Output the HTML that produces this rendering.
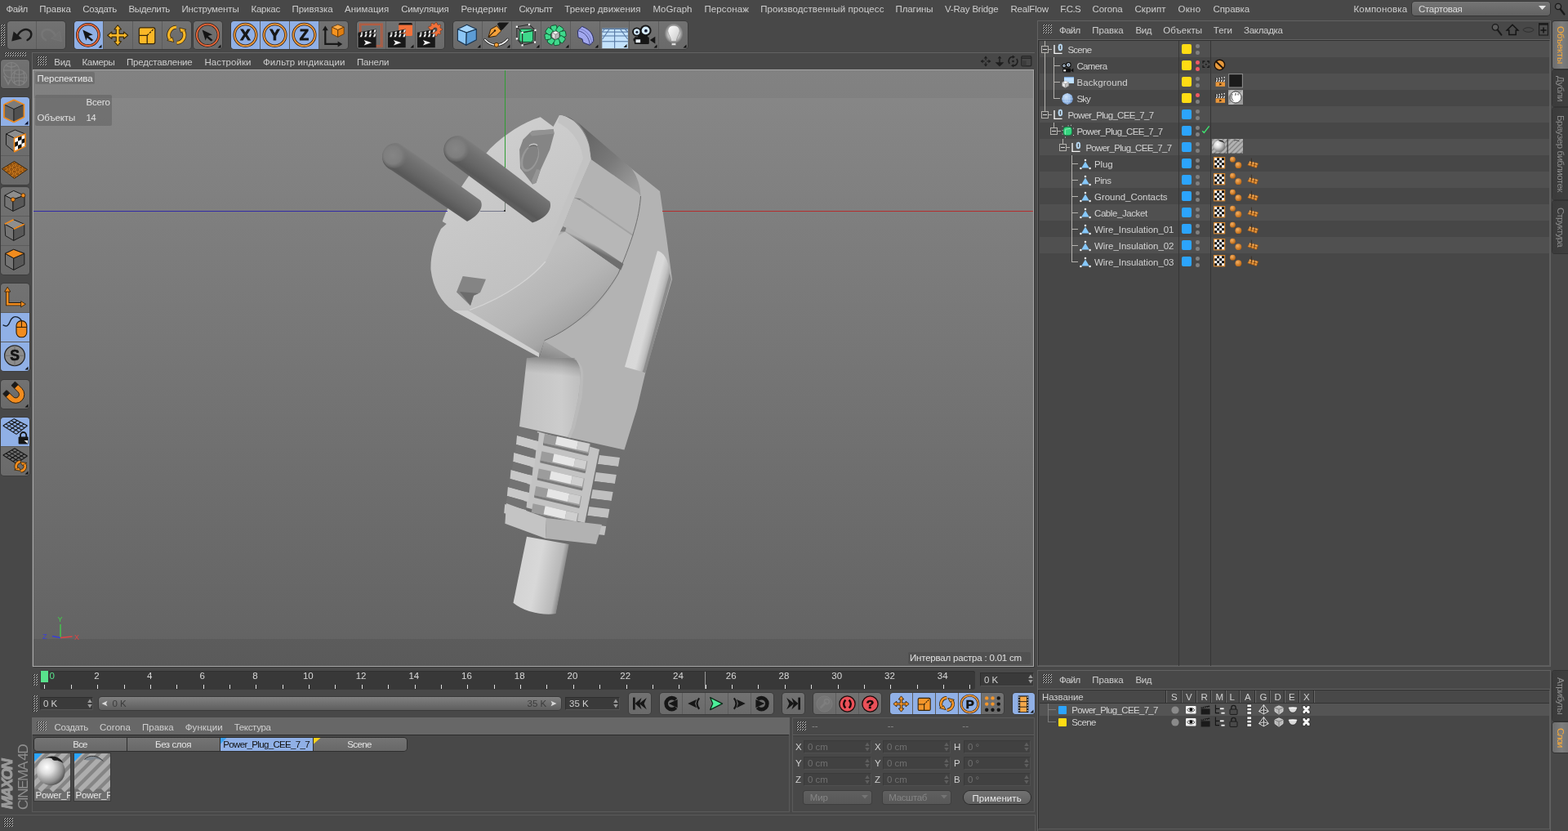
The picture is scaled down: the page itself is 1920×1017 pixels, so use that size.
<!DOCTYPE html>
<html lang="ru"><head><meta charset="utf-8"><title>CINEMA 4D</title>
<style>
html,body{margin:0;padding:0;background:#484848;}
body{width:1920px;height:1017px;overflow:hidden;position:relative;font-family:"Liberation Sans",sans-serif;font-size:11.5px;color:#cdcdcd;}
.b{position:absolute;box-sizing:border-box;}
.t{position:absolute;white-space:nowrap;line-height:14px;}
#root{position:absolute;left:0;top:0;width:1920px;height:1017px;overflow:hidden;will-change:transform;}
svg{position:absolute;overflow:visible;}
.grip{position:absolute;background-image:repeating-linear-gradient(135deg,#999 0,#999 1px,transparent 1px,transparent 2.83px);opacity:.75}
.btn{position:absolute;box-sizing:border-box;background:linear-gradient(#727272,#6a6a6a);}
.grp{position:absolute;box-sizing:border-box;border-radius:4px;background:linear-gradient(#727272,#6a6a6a);box-shadow:0 0 0 1px #3c3c3c;overflow:hidden;}
.grp .sep{position:absolute;background:#5c5c5c;}
.on{position:absolute;background:#90b0e6;}
.fld{position:absolute;box-sizing:border-box;background:#3a3a3a;border:1px solid #2f2f2f;border-bottom-color:#555;border-right-color:#505050;}
</style></head>
<body>
<div id="root">
<svg width="0" height="0" style="left:0;top:0"><defs><pattern id="gp" width="3" height="3" patternUnits="userSpaceOnUse"><rect x="1" y="0" width="1" height="1" fill="#262626"/><rect x="0" y="1" width="1" height="1" fill="#262626"/><rect x="2" y="0" width="1" height="1" fill="#c4c4c4"/><rect x="1" y="1" width="1" height="1" fill="#c4c4c4"/></pattern></defs></svg><span class="t" style="left:7.5px;top:4.02px;letter-spacing:-0.506px;">Файл</span><span class="t" style="left:48.25px;top:4.02px;letter-spacing:-0.058px;">Правка</span><span class="t" style="left:101.25px;top:4.02px;letter-spacing:-0.279px;">Создать</span><span class="t" style="left:157.5px;top:4.02px;letter-spacing:-0.319px;">Выделить</span><span class="t" style="left:222.5px;top:4.02px;letter-spacing:-0.155px;">Инструменты</span><span class="t" style="left:307.5px;top:4.02px;letter-spacing:-0.237px;">Каркас</span><span class="t" style="left:357.5px;top:4.02px;letter-spacing:-0.031px;">Привязка</span><span class="t" style="left:422px;top:4.02px;letter-spacing:0.033px;">Анимация</span><span class="t" style="left:491.25px;top:4.02px;letter-spacing:-0.243px;">Симуляция</span><span class="t" style="left:564.5px;top:4.02px;letter-spacing:0.041px;">Рендеринг</span><span class="t" style="left:635.5px;top:4.02px;letter-spacing:-0.273px;">Скульпт</span><span class="t" style="left:691.25px;top:4.02px;letter-spacing:0.040px;">Трекер движения</span><span class="t" style="left:799.5px;top:4.02px;letter-spacing:0.009px;">MoGraph</span><span class="t" style="left:862.5px;top:4.02px;letter-spacing:0.091px;">Персонаж</span><span class="t" style="left:931.25px;top:4.02px;letter-spacing:0.096px;">Производственный процесс</span><span class="t" style="left:1096.5px;top:4.02px;letter-spacing:-0.087px;">Плагины</span><span class="t" style="left:1157px;top:4.02px;letter-spacing:-0.188px;">V-Ray Bridge</span><span class="t" style="left:1237.5px;top:4.02px;letter-spacing:-0.210px;">RealFlow</span><span class="t" style="left:1298.25px;top:4.02px;letter-spacing:-0.673px;">F.C.S</span><span class="t" style="left:1337.5px;top:4.02px;letter-spacing:-0.120px;">Corona</span><span class="t" style="left:1389.5px;top:4.02px;letter-spacing:0.058px;">Скрипт</span><span class="t" style="left:1442.5px;top:4.02px;letter-spacing:0.319px;">Окно</span><span class="t" style="left:1485.5px;top:4.02px;letter-spacing:-0.088px;">Справка</span><span class="t" style="left:1657.5px;top:4.02px;letter-spacing:0.159px;">Компоновка</span><div class="b" style="left:1729px;top:2px;width:169px;height:17px;border-radius:4px;background:linear-gradient(#757575,#626262);box-shadow:0 0 0 1px #353535;"></div><span class="t" style="left:1737px;top:4.02px;color:#dcdcdc;letter-spacing:-0.291px;">Стартовая</span><svg style="left:1884px;top:7px" width="9" height="6"><path d="M0 0h9L4.5 5z" fill="#e4e4e4"/></svg><svg style="left:1903px;top:3px" width="14" height="16" viewBox="0 0 14 16"><circle cx="5" cy="5" r="3.6" fill="#5a5a5a" stroke="#1a1a1a" stroke-width="1.4"/><path d="M7.5 8L12.5 14.5" stroke="#1a1a1a" stroke-width="2.2" stroke-linecap="round"/></svg><svg style="left:0px;top:30px" width="6" height="27"><rect width="6" height="27" fill="url(#gp)"/></svg><div class="grp" style="left:9px;top:26px;width:71px;height:34px"><div class="sep" style="left:35px;top:0;width:1px;height:34px"></div></div><svg style="left:9px;top:26px" width="35" height="34" viewBox="0 0 35 34"><polygon points="5.2,24.6 7.6,12.4 18,21.2" fill="#1c1c1c" /><path d="M12.5,17.6 C16,10.5 22,8.8 26.2,10.8 C30.6,13.2 30.6,19.5 24.6,23" fill="none" stroke="#1c1c1c" stroke-width="2.5" stroke-linecap="round"/></svg><svg style="left:45px;top:26px" width="35" height="34" viewBox="0 0 35 34"><g opacity=".55"><polygon points="30.4,24.6 28,12.4 17.6,21.2" fill="#747474" stroke="#7e7e7e" stroke-width="0.8" stroke-linejoin="round" /><path d="M23,17.6 C19.5,10.5 13.5,8.8 9.4,10.8 C5,13.2 5,19.5 11,23" fill="none" stroke="#7c7c7c" stroke-width="2.5" stroke-linecap="round"/></g></svg><div class="grp" style="left:91px;top:26px;width:143px;height:34px"><div class="on" style="left:0px;top:0;width:35px;height:34px"></div><div class="sep" style="left:35px;top:0;width:1px;height:34px"></div><div class="sep" style="left:71px;top:0;width:1px;height:34px"></div><div class="sep" style="left:107px;top:0;width:1px;height:34px"></div></div><svg style="left:91px;top:26px" width="35" height="34" viewBox="0 0 35 34"><circle cx="16.9" cy="16.8" r="13.2" fill="none" stroke="#2a1a10" stroke-width="3.4"/><circle cx="16.9" cy="16.8" r="13.2" fill="none" stroke="#e8683c" stroke-width="1.9"/><polygon points="10.25,10.6 22.75,16.4 17.3,18.1 23.2,23.1 21.1,24.6 15.7,19.9 14.4,23.8" fill="#141414" /><path d="M33.5 28.5L33.5 32.5L29.5 32.5z" fill="#111"/></svg><svg style="left:127px;top:26px" width="35" height="34" viewBox="0 0 35 34"><polygon points="17.2,4.75 21.4,9.95 19.1,9.95 19.1,15.35 24.5,15.35 24.5,13.05 29.7,17.25 24.5,21.45 24.5,19.15 19.1,19.15 19.1,24.55 21.4,24.55 17.2,29.75 13,24.55 15.3,24.55 15.3,19.15 9.9,19.15 9.9,21.45 4.7,17.25 9.9,13.05 9.9,15.35 15.3,15.35 15.3,9.95 13,9.95" fill="#fcb827" stroke="#3a2a08" stroke-width="1.1" stroke-linejoin="round" /></svg><svg style="left:163px;top:26px" width="35" height="34" viewBox="0 0 35 34"><rect x="7.3" y="7.8" width="19.5" height="19.8" rx="2" fill="#fcb827" stroke="#33240a" stroke-width="1.2"/><path d="M7.3,17.4H17.2V27.6" fill="none" stroke="#33240a" stroke-width="1.3"/><path d="M17.2,17.4L26,8.6" fill="none" stroke="#33240a" stroke-width="1.3" stroke-dasharray="2.6 1.3"/></svg><svg style="left:199px;top:26px" width="35" height="34" viewBox="0 0 35 34"><path d="M16.91,7.21 A9.6,9.6 0 0 0 8.94,21.60" fill="none" stroke="#33240a" stroke-width="4.7"/><path d="M16.91,7.21 A9.6,9.6 0 0 0 8.94,21.60" fill="none" stroke="#fcb827" stroke-width="3.2"/><polygon points="5.74918,23.44 13.7257,25.5229 12.1231,19.76" fill="#fcb827" stroke="#33240a" stroke-width="0.8" stroke-linejoin="round" /><path d="M8.70,21.16 L9.11,21.89" stroke="#fcb827" stroke-width="3.2"/><path d="M17.59,26.39 A9.6,9.6 0 0 0 25.56,12.00" fill="none" stroke="#33240a" stroke-width="4.7"/><path d="M17.59,26.39 A9.6,9.6 0 0 0 25.56,12.00" fill="none" stroke="#fcb827" stroke-width="3.2"/><polygon points="28.7508,10.16 20.7743,8.07705 22.3769,13.84" fill="#fcb827" stroke="#33240a" stroke-width="0.8" stroke-linejoin="round" /><path d="M25.80,12.44 L25.39,11.71" stroke="#fcb827" stroke-width="3.2"/></svg><div class="grp" style="left:237px;top:26px;width:35px;height:34px"></div><svg style="left:237px;top:26px" width="35" height="34" viewBox="0 0 35 34"><circle cx="17.2" cy="16.8" r="13.2" fill="none" stroke="#2a1a10" stroke-width="3.4"/><circle cx="17.2" cy="16.8" r="13.2" fill="none" stroke="#e8683c" stroke-width="1.9"/><polygon points="10.55,10.6 23.05,16.4 17.6,18.1 23.5,23.1 21.4,24.6 16,19.9 14.7,23.8" fill="#141414" /><path d="M33.5 28.5L33.5 32.5L29.5 32.5z" fill="#111"/></svg><div class="grp" style="left:283px;top:26px;width:143px;height:34px"><div class="on" style="left:0px;top:0;width:35px;height:34px"></div><div class="on" style="left:36px;top:0;width:35px;height:34px"></div><div class="on" style="left:72px;top:0;width:35px;height:34px"></div><div class="sep" style="left:35px;top:0;width:1px;height:34px"></div><div class="sep" style="left:71px;top:0;width:1px;height:34px"></div><div class="sep" style="left:107px;top:0;width:1px;height:34px"></div></div><svg style="left:283px;top:26px" width="35" height="34" viewBox="0 0 35 34"><circle cx="17.5" cy="16.8" r="13.3" fill="none" stroke="#2a1a10" stroke-width="3.4"/><circle cx="17.5" cy="16.8" r="13.3" fill="none" stroke="#e8963a" stroke-width="1.9"/><text x="17.5" y="23.3" text-anchor="middle" font-family="Liberation Sans,sans-serif" font-weight="bold" font-size="18.5" fill="#161616" stroke="#161616" stroke-width="0.9">X</text></svg><svg style="left:319px;top:26px" width="35" height="34" viewBox="0 0 35 34"><circle cx="17.5" cy="16.8" r="13.3" fill="none" stroke="#2a1a10" stroke-width="3.4"/><circle cx="17.5" cy="16.8" r="13.3" fill="none" stroke="#e8963a" stroke-width="1.9"/><text x="17.5" y="23.3" text-anchor="middle" font-family="Liberation Sans,sans-serif" font-weight="bold" font-size="18.5" fill="#161616" stroke="#161616" stroke-width="0.9">Y</text></svg><svg style="left:355px;top:26px" width="35" height="34" viewBox="0 0 35 34"><circle cx="17.5" cy="16.8" r="13.3" fill="none" stroke="#2a1a10" stroke-width="3.4"/><circle cx="17.5" cy="16.8" r="13.3" fill="none" stroke="#e8963a" stroke-width="1.9"/><text x="17.5" y="23.3" text-anchor="middle" font-family="Liberation Sans,sans-serif" font-weight="bold" font-size="18.5" fill="#161616" stroke="#161616" stroke-width="0.9">Z</text></svg><svg style="left:391px;top:26px" width="35" height="34" viewBox="0 0 35 34"><path d="M7.3,9V27.9H24" fill="none" stroke="#181818" stroke-width="2.2"/><polygon points="7.3,5.6 10.8,11.2 3.8,11.2" fill="#181818" /><polygon points="28.3,27.9 22.6,24.4 22.6,31.4" fill="#181818" /><polygon points="22.7,4 30.2,7.2 22.7,10.6 15.2,7.2" fill="#ffab45" stroke="#5a3208" stroke-width="0.8" stroke-linejoin="round" /><polygon points="15.2,7.2 22.7,10.6 22.7,19.3 15.2,15.6" fill="#f5921e" stroke="#5a3208" stroke-width="0.8" stroke-linejoin="round" /><polygon points="22.7,10.6 30.2,7.2 30.2,15.6 22.7,19.3" fill="#e07e10" stroke="#5a3208" stroke-width="0.8" stroke-linejoin="round" /></svg><div class="grp" style="left:437px;top:26px;width:107px;height:34px"><div class="sep" style="left:35px;top:0;width:1px;height:34px"></div><div class="sep" style="left:71px;top:0;width:1px;height:34px"></div></div><svg style="left:437px;top:26px" width="35" height="34" viewBox="0 0 35 34"><rect x="4.2" y="3.8" width="26.2" height="26.6" fill="none" stroke="#d9562c" stroke-width="2.4"/><rect x="4.2" y="3.8" width="26.2" height="26.6" fill="none" stroke="#6b6b6b" stroke-width="0.7"/><polygon points="1.6,13.8 23.6,9.4 23.6,13.4 1.6,17.8" fill="#181818" /><polygon points="5.1,13.86 7.3,13.46 6.5,16.56 4.3,16.96" fill="#f2f2f2" /><polygon points="10.5,12.78 12.7,12.38 11.9,15.48 9.7,15.88" fill="#f2f2f2" /><polygon points="15.9,11.7 18.1,11.3 17.3,14.4 15.1,14.8" fill="#f2f2f2" /><polygon points="21.3,10.62 23.5,10.22 22.7,13.32 20.5,13.72" fill="#f2f2f2" /><rect x="1.6" y="19.6" width="22" height="12.6" fill="#181818"/><rect x="1.6" y="15" width="22" height="4.8" fill="#181818"/><polygon points="5.1,15.5 7.3,15.5 5.9,19.2 3.7,19.2" fill="#f2f2f2" /><polygon points="10.5,15.5 12.7,15.5 11.3,19.2 9.1,19.2" fill="#f2f2f2" /><polygon points="15.9,15.5 18.1,15.5 16.7,19.2 14.5,19.2" fill="#f2f2f2" /><polygon points="21.3,15.5 23.5,15.5 22.1,19.2 19.9,19.2" fill="#f2f2f2" /><polygon points="8.6,23 18.1,26.2 8.6,29.4 10.8,26.2" fill="#f4f4f4" /></svg><svg style="left:473px;top:26px" width="35" height="34" viewBox="0 0 35 34"><rect x="15.2" y="2" width="16.8" height="16" rx="1.6" fill="#f2713a"/><path d="M15.2,4.6V3.6Q15.2,2 16.8,2H30.4Q32,2 32,3.6V4.6z" fill="#181818"/><polygon points="2,13.8 23.7,9.4 23.7,13.4 2,17.8" fill="#181818" /><polygon points="5.5,13.86 7.7,13.46 6.9,16.56 4.7,16.96" fill="#f2f2f2" /><polygon points="10.9,12.78 13.1,12.38 12.3,15.48 10.1,15.88" fill="#f2f2f2" /><polygon points="16.3,11.7 18.5,11.3 17.7,14.4 15.5,14.8" fill="#f2f2f2" /><polygon points="21.7,10.62 23.9,10.22 23.1,13.32 20.9,13.72" fill="#f2f2f2" /><rect x="2" y="19.6" width="21.7" height="12.6" fill="#181818"/><rect x="2" y="15" width="21.7" height="4.8" fill="#181818"/><polygon points="5.5,15.5 7.7,15.5 6.3,19.2 4.1,19.2" fill="#f2f2f2" /><polygon points="10.9,15.5 13.1,15.5 11.7,19.2 9.5,19.2" fill="#f2f2f2" /><polygon points="16.3,15.5 18.5,15.5 17.1,19.2 14.9,19.2" fill="#f2f2f2" /><polygon points="21.7,15.5 23.9,15.5 22.5,19.2 20.3,19.2" fill="#f2f2f2" /><polygon points="8.85,23 18.35,26.2 8.85,29.4 11.05,26.2" fill="#f4f4f4" /><path d="M33.5 28.5L33.5 32.5L29.5 32.5z" fill="#111"/></svg><svg style="left:509px;top:26px" width="35" height="34" viewBox="0 0 35 34"><polygon points="32.3652,9.22704 32.3693,10.7261 30.2842,11.7184 29.8872,12.8183 30.8582,14.9135 29.8977,16.0645 27.6626,15.4843 26.6515,16.0717 26.0485,18.3008 24.573,18.5652 23.2336,16.684 22.0816,16.4842 20.1868,17.8042 18.8865,17.0582 19.0697,14.7562 18.3157,13.8626 16.0157,13.6558 15.4992,12.2485 17.1191,10.6029 17.116,9.43363 15.487,7.79687 15.9958,6.3868 18.2946,6.16748 19.0438,5.26971 18.848,2.9688 20.1442,2.21572 22.0461,3.52534 23.1971,3.31915 24.5261,1.43071 26.0031,1.68698 26.6183,3.91276 27.6325,4.49463 29.8645,3.90228 30.8312,5.048 29.8717,7.14847 30.2747,8.24614" fill="#f2713a" stroke="#6a2a10" stroke-width="0.6" stroke-linejoin="round" /><circle cx="23.8" cy="10" r="2.6" fill="#4a4a4a"/><polygon points="2,13.8 23.8,9.4 23.8,13.4 2,17.8" fill="#181818" /><polygon points="5.5,13.86 7.7,13.46 6.9,16.56 4.7,16.96" fill="#f2f2f2" /><polygon points="10.9,12.78 13.1,12.38 12.3,15.48 10.1,15.88" fill="#f2f2f2" /><polygon points="16.3,11.7 18.5,11.3 17.7,14.4 15.5,14.8" fill="#f2f2f2" /><polygon points="21.7,10.62 23.9,10.22 23.1,13.32 20.9,13.72" fill="#f2f2f2" /><rect x="2" y="19.6" width="21.8" height="12.6" fill="#181818"/><rect x="2" y="15" width="21.8" height="4.8" fill="#181818"/><polygon points="5.5,15.5 7.7,15.5 6.3,19.2 4.1,19.2" fill="#f2f2f2" /><polygon points="10.9,15.5 13.1,15.5 11.7,19.2 9.5,19.2" fill="#f2f2f2" /><polygon points="16.3,15.5 18.5,15.5 17.1,19.2 14.9,19.2" fill="#f2f2f2" /><polygon points="21.7,15.5 23.9,15.5 22.5,19.2 20.3,19.2" fill="#f2f2f2" /><polygon points="8.9,23 18.4,26.2 8.9,29.4 11.1,26.2" fill="#f4f4f4" /></svg><div class="grp" style="left:555px;top:26px;width:287px;height:34px"><div class="sep" style="left:35px;top:0;width:1px;height:34px"></div><div class="sep" style="left:71px;top:0;width:1px;height:34px"></div><div class="sep" style="left:107px;top:0;width:1px;height:34px"></div><div class="sep" style="left:143px;top:0;width:1px;height:34px"></div><div class="sep" style="left:179px;top:0;width:1px;height:34px"></div><div class="sep" style="left:215px;top:0;width:1px;height:34px"></div><div class="sep" style="left:251px;top:0;width:1px;height:34px"></div></div><svg style="left:555px;top:26px" width="35" height="34" viewBox="0 0 35 34"><polygon points="16.7,4.3 28.3,9.75 16.25,13.9 5.4,9.75" fill="#a6d6fb" stroke="#17334f" stroke-width="1.1" stroke-linejoin="round" /><polygon points="5.4,9.75 16.25,13.9 15.8,29.3 5.4,23.5" fill="#8cc6f6" stroke="#17334f" stroke-width="1.1" stroke-linejoin="round" /><polygon points="16.25,13.9 28.3,9.75 28.3,22.7 15.8,29.3" fill="#5d9dd6" stroke="#17334f" stroke-width="1.1" stroke-linejoin="round" /><path d="M33.5 28.5L33.5 32.5L29.5 32.5z" fill="#111"/></svg><svg style="left:591px;top:26px" width="35" height="34" viewBox="0 0 35 34"><polygon points="17.75,3 20.25,1.4 32.3,1.4 24.8,9.75 22.3,11.4" fill="#181818" /><polygon points="6.9,19.75 9.8,9.75 17.3,5.6 22.75,11.8 16.5,18" fill="#f5a13a" stroke="#3a2206" stroke-width="1" stroke-linejoin="round" /><path d="M7.4,19.2L15,11.6" stroke="#2a1804" stroke-width="1.1"/><circle cx="15" cy="11.4" r="1.2" fill="#2a1804"/><path d="M2.75,22.5 C8,28 12,29.2 16.6,29.2 C22,29.2 27,26.5 30.7,22.1" fill="none" stroke="#222" stroke-width="3.2" stroke-linecap="round"/><path d="M2.75,22.5 C8,28 12,29.2 16.6,29.2 C22,29.2 27,26.5 30.7,22.1" fill="none" stroke="#f4f4f4" stroke-width="1.7" stroke-linecap="round"/><circle cx="16.9" cy="28.9" r="2.6" fill="#f5a13a" stroke="#3a2206" stroke-width="0.9"/><path d="M33.5 28.5L33.5 32.5L29.5 32.5z" fill="#111"/></svg><svg style="left:627px;top:26px" width="35" height="34" viewBox="0 0 35 34"><rect x="9" y="9.4" width="16.6" height="16" rx="3" fill="#3fd98c" stroke="#0d4f2c" stroke-width="1"/><path d="M12.6,13.6L24.4,11.6M12.6,13.6V25" stroke="#0d6f3c" stroke-width="1.1" fill="none"/><path d="M9.6,12.5L12.8,14" stroke="#0d6f3c" stroke-width="1"/><path d="M5.9,6.8L21,4L28.4,11L28,25.6L12.6,29.3L5.9,21.4Z M5.9,6.8L12.6,14L28.4,11 M12.6,14V29.3" fill="none" stroke="#2a2a2a" stroke-width="1.1"/><rect x="4.8" y="5.7" width="2.2" height="2.2" fill="#fff"/><rect x="19.9" y="2.9" width="2.2" height="2.2" fill="#fff"/><rect x="27.3" y="9.9" width="2.2" height="2.2" fill="#fff"/><rect x="26.9" y="24.5" width="2.2" height="2.2" fill="#fff"/><rect x="11.5" y="28.2" width="2.2" height="2.2" fill="#fff"/><rect x="4.8" y="20.3" width="2.2" height="2.2" fill="#fff"/><rect x="11.5" y="12.9" width="2.2" height="2.2" fill="#fff"/><path d="M33.5 28.5L33.5 32.5L29.5 32.5z" fill="#111"/></svg><svg style="left:663px;top:26px" width="35" height="34" viewBox="0 0 35 34"><rect x="11.6851" y="5.03065" width="7.4" height="7.4" rx="1.6" fill="#3fd98c" stroke="#0d4f2c" stroke-width="0.9" transform="rotate(-10 15.3851 8.73065)"/><rect x="18.6343" y="6.45529" width="7.4" height="7.4" rx="1.6" fill="#3fd98c" stroke="#0d4f2c" stroke-width="0.9" transform="rotate(35 22.3343 10.1553)"/><rect x="22.4587" y="12.0066" width="7.4" height="7.4" rx="1.6" fill="#3fd98c" stroke="#0d4f2c" stroke-width="0.9" transform="rotate(80 26.1587 15.7066)"/><rect x="20.9181" y="18.4328" width="7.4" height="7.4" rx="1.6" fill="#3fd98c" stroke="#0d4f2c" stroke-width="0.9" transform="rotate(125 24.6181 22.1328)"/><rect x="14.9149" y="21.9693" width="7.4" height="7.4" rx="1.6" fill="#3fd98c" stroke="#0d4f2c" stroke-width="0.9" transform="rotate(170 18.6149 25.6693)"/><rect x="7.96574" y="20.5447" width="7.4" height="7.4" rx="1.6" fill="#3fd98c" stroke="#0d4f2c" stroke-width="0.9" transform="rotate(215 11.6657 24.2447)"/><rect x="4.14129" y="14.9934" width="7.4" height="7.4" rx="1.6" fill="#3fd98c" stroke="#0d4f2c" stroke-width="0.9" transform="rotate(260 7.84129 18.6934)"/><rect x="5.68189" y="8.56724" width="7.4" height="7.4" rx="1.6" fill="#3fd98c" stroke="#0d4f2c" stroke-width="0.9" transform="rotate(305 9.38189 12.2672)"/><polygon points="17.2,12 21.6,14 17.2,16.2 13,14" fill="#f6f6f6" stroke="#777" stroke-width="0.5" stroke-linejoin="round" /><polygon points="13,14 17.2,16.2 17,22.2 13,19.6" fill="#e2e2e2" stroke="#777" stroke-width="0.5" stroke-linejoin="round" /><polygon points="17.2,16.2 21.6,14 21.6,19.8 17,22.2" fill="#b8b8b8" stroke="#777" stroke-width="0.5" stroke-linejoin="round" /><path d="M33.5 28.5L33.5 32.5L29.5 32.5z" fill="#111"/></svg><svg style="left:699px;top:26px" width="35" height="34" viewBox="0 0 35 34"><path d="M13.7,6.4 L8.25,11.4 L9,19.75 L14,21.8 L15,26 L23.25,29.3 L27.8,24.3 C27.6,16 24,10.5 13.7,6.4 Z" fill="#a2a8ef" stroke="#2a2e66" stroke-width="1"/><path d="M8.6,11.6 C17,13.5 22.3,19 23.3,29" fill="none" stroke="#3a3f7a" stroke-width="0.9"/><path d="M11,9 C19,11.5 24.6,17.5 25.6,26.6" fill="none" stroke="#6a70b8" stroke-width="0.8"/><path d="M33.5 28.5L33.5 32.5L29.5 32.5z" fill="#111"/></svg><svg style="left:735px;top:26px" width="35" height="34" viewBox="0 0 35 34"><rect x="2.3" y="8.6" width="31.6" height="24.6" fill="#c4e2fb"/><rect x="2.3" y="8.6" width="31.6" height="1.3" fill="#47678c"/><rect x="2.3" y="12.6" width="31.6" height="1.1" fill="#5a7ca6"/><rect x="2.3" y="17.4" width="31.6" height="1.1" fill="#5a7ca6"/><rect x="2.3" y="24.2" width="31.6" height="1.1" fill="#5a7ca6"/><path d="M17.6,9V33 M11.6,9L2.6,22 M24,9L33.6,22 M6,9L2.4,13 M29.6,9L33.8,13" stroke="#5a7ca6" stroke-width="1.1" fill="none"/><path d="M32.5 28L32.5 32L28.5 32z" fill="#111"/></svg><svg style="left:771px;top:26px" width="35" height="34" viewBox="0 0 35 34"><rect x="5.8" y="19.3" width="18" height="8.6" rx="1.2" fill="#161616"/><polygon points="24.8,22.9 31.3,18.7 31.3,27.4" fill="#161616" /><rect x="10" y="15" width="12" height="6" fill="#161616"/><rect x="4.6" y="21" width="3" height="3.4" fill="#161616"/><circle cx="8.75" cy="13" r="5.6" fill="#161616"/><circle cx="19.6" cy="11.4" r="7" fill="#161616"/><circle cx="8.75" cy="13" r="3.7" fill="#d6ecff"/><circle cx="19.6" cy="11.4" r="4.9" fill="#d6ecff"/><circle cx="8.9" cy="13.2" r="1.5" fill="#161c30"/><circle cx="19.9" cy="11.7" r="1.9" fill="#161c30"/><rect x="7.5" y="22.3" width="5.6" height="3.9" fill="#eaf2fa"/><path d="M33.5 28.5L33.5 32.5L29.5 32.5z" fill="#111"/></svg><svg style="left:807px;top:26px" width="35" height="34" viewBox="0 0 35 34"><defs><radialGradient id="lgl"><stop offset=".45" stop-color="#fff" stop-opacity=".85"/><stop offset="1" stop-color="#fff" stop-opacity="0"/></radialGradient><linearGradient id="lbb" x1="0" y1="0" x2="1" y2="1"><stop offset="0" stop-color="#fff"/><stop offset="1" stop-color="#c9c9c9"/></linearGradient></defs><ellipse cx="18" cy="15" rx="11.5" ry="12.5" fill="url(#lgl)"/><path d="M18,5.2 C23.4,5.2 25.6,9.4 25.2,12.6 C24.7,16.6 21.6,19.4 21.2,24.6 H14.8 C14.4,19.4 11.3,16.6 10.8,12.6 C10.4,9.4 12.6,5.2 18,5.2 Z" fill="url(#lbb)" stroke="#8a8a8a" stroke-width="0.7"/><rect x="15" y="24.8" width="6" height="1.6" fill="#8a8a8a"/><rect x="15.2" y="26.8" width="5.6" height="2.6" rx="1" fill="#eee" stroke="#666" stroke-width="0.6"/><path d="M33.5 28.5L33.5 32.5L29.5 32.5z" fill="#111"/></svg><svg style="left:5px;top:64px" width="27" height="6"><rect width="27" height="6" fill="url(#gp)"/></svg><div class="grp" style="left:1px;top:73px;width:35px;height:35px"></div><svg style="left:1px;top:73px" width="35" height="35" viewBox="0 0 35 35"><g fill="none" stroke="#858585" stroke-width="1.1" opacity=".9"><circle cx="13" cy="13" r="9.5"/><path d="M13,3.5V22.5M3.5,13H22.5M6,6.5C10,10 16,10 20,6.5"/><circle cx="22.5" cy="22" r="9.5" fill="#6e6e6e"/><path d="M22.5,12.5V31.5M13,22H32M15.5,16C20,19 25,19 29.5,16M15.5,28C20,25 25,25 29.5,28M17.8,13.8C15.5,19 15.5,25 17.8,30.2M27.2,13.8C29.5,19 29.5,25 27.2,30.2"/><path d="M4,20L9,30L12,24" stroke-width="1.6"/></g></svg><div class="grp" style="left:1px;top:119px;width:35px;height:107px"><div class="on" style="left:0;top:0px;width:35px;height:35px"></div><div class="sep" style="left:0;top:35px;width:35px;height:1px"></div><div class="sep" style="left:0;top:71px;width:35px;height:1px"></div></div><svg style="left:1px;top:119px" width="35" height="35" viewBox="0 0 35 35"><polygon points="16,3.3 28.4,9 16,14.6 4,9" fill="#7c7c7c" stroke="#222" stroke-width="0.9" stroke-linejoin="round" /><polygon points="4,9 16,14.6 16,30.5 4,24.8" fill="#676767" stroke="#222" stroke-width="0.9" stroke-linejoin="round" /><polygon points="16,14.6 28.4,9 28.4,24.2 16,30.5" fill="#505050" stroke="#222" stroke-width="0.9" stroke-linejoin="round" /><polygon points="16,3.3 4,9 4,24.8 16,30.5 28.4,24.2 28.4,9" fill="none" stroke="#f28c1e" stroke-width="1.7" stroke-linejoin="round" /><path d="M33.5 29L33.5 33.5L29 33.5z" fill="#0c1430"/></svg><svg style="left:1px;top:155px" width="35" height="35" viewBox="0 0 35 35"><polygon points="17.4,4 30,9 16.5,14 6.5,9" fill="#8e8e8e" stroke="#1c1c1c" stroke-width="1" stroke-linejoin="round" /><polygon points="6.5,9 16.5,14 16.5,30.7 6.5,22.4" fill="#747474" stroke="#1c1c1c" stroke-width="1" stroke-linejoin="round" /><polygon points="16.5,14 30,9 30,24 16.5,30.7" fill="#fff" stroke="#1c1c1c" stroke-width="1" stroke-linejoin="round" /><polygon points="16.5,19.5667 21,17.7111 21,23.0889 16.5,25.1333" fill="#111" /><polygon points="21,12.3333 25.5,10.6667 25.5,15.8556 21,17.7111" fill="#111" /><polygon points="21,23.0889 25.5,21.0444 25.5,26.2333 21,28.4667" fill="#111" /><polygon points="25.5,15.8556 30,14 30,19 25.5,21.0444" fill="#111" /><polygon points="16.5,14 30,9 30,24 16.5,30.7" fill="none" stroke="#f28c1e" stroke-width="1.6" stroke-linejoin="round" /></svg><svg style="left:1px;top:191px" width="35" height="35" viewBox="0 0 35 35"><polygon points="1.5,15.6 16.5,6.5 32.4,16.5 16.5,27.4" fill="#f5962a" stroke="#2a1a06" stroke-width="1" stroke-linejoin="round" /><path d="M5.25,13.325L20.475,24.675" stroke="#7a4208" stroke-width="0.7"/><path d="M5.25,18.55L20.475,9" stroke="#7a4208" stroke-width="0.7"/><path d="M9,11.05L24.45,21.95" stroke="#7a4208" stroke-width="0.7"/><path d="M9,21.5L24.45,11.5" stroke="#7a4208" stroke-width="0.7"/><path d="M12.75,8.775L28.425,19.225" stroke="#7a4208" stroke-width="0.7"/><path d="M12.75,24.45L28.425,14" stroke="#7a4208" stroke-width="0.7"/><ellipse cx="5.26406" cy="15.9094" rx="1.55" ry="1.05" fill="#c06a14" stroke="#4a2a06" stroke-width="0.7"/><ellipse cx="9.04219" cy="18.8031" rx="1.55" ry="1.05" fill="#c06a14" stroke="#4a2a06" stroke-width="0.7"/><ellipse cx="12.8203" cy="21.6969" rx="1.55" ry="1.05" fill="#c06a14" stroke="#4a2a06" stroke-width="0.7"/><ellipse cx="16.5984" cy="24.5906" rx="1.55" ry="1.05" fill="#c06a14" stroke="#4a2a06" stroke-width="0.7"/><ellipse cx="9.04219" cy="13.5781" rx="1.55" ry="1.05" fill="#c06a14" stroke="#4a2a06" stroke-width="0.7"/><ellipse cx="12.8766" cy="16.3594" rx="1.55" ry="1.05" fill="#c06a14" stroke="#4a2a06" stroke-width="0.7"/><ellipse cx="16.7109" cy="19.1406" rx="1.55" ry="1.05" fill="#c06a14" stroke="#4a2a06" stroke-width="0.7"/><ellipse cx="20.5453" cy="21.9219" rx="1.55" ry="1.05" fill="#c06a14" stroke="#4a2a06" stroke-width="0.7"/><ellipse cx="12.8203" cy="11.2469" rx="1.55" ry="1.05" fill="#c06a14" stroke="#4a2a06" stroke-width="0.7"/><ellipse cx="16.7109" cy="13.9156" rx="1.55" ry="1.05" fill="#c06a14" stroke="#4a2a06" stroke-width="0.7"/><ellipse cx="20.6016" cy="16.5844" rx="1.55" ry="1.05" fill="#c06a14" stroke="#4a2a06" stroke-width="0.7"/><ellipse cx="24.4922" cy="19.2531" rx="1.55" ry="1.05" fill="#c06a14" stroke="#4a2a06" stroke-width="0.7"/><ellipse cx="16.5984" cy="8.91563" rx="1.55" ry="1.05" fill="#c06a14" stroke="#4a2a06" stroke-width="0.7"/><ellipse cx="20.5453" cy="11.4719" rx="1.55" ry="1.05" fill="#c06a14" stroke="#4a2a06" stroke-width="0.7"/><ellipse cx="24.4922" cy="14.0281" rx="1.55" ry="1.05" fill="#c06a14" stroke="#4a2a06" stroke-width="0.7"/><ellipse cx="28.4391" cy="16.5844" rx="1.55" ry="1.05" fill="#c06a14" stroke="#4a2a06" stroke-width="0.7"/></svg><div class="grp" style="left:1px;top:229px;width:35px;height:107px"><div class="sep" style="left:0;top:35px;width:35px;height:1px"></div><div class="sep" style="left:0;top:71px;width:35px;height:1px"></div></div><svg style="left:1px;top:229px" width="35" height="35" viewBox="0 0 35 35"><polygon points="15.7,4.4 29,10.2 14.9,15.2 4.85,10.2" fill="#8e8e8e" stroke="#1c1c1c" stroke-width="1" stroke-linejoin="round" /><polygon points="4.85,10.2 14.9,15.2 14.9,29.4 4.85,23.6" fill="#747474" stroke="#1c1c1c" stroke-width="1" stroke-linejoin="round" /><polygon points="14.9,15.2 29,10.2 29,22.75 14.9,29.4" fill="#585858" stroke="#1c1c1c" stroke-width="1" stroke-linejoin="round" /><circle cx="14.9" cy="15.2" r="2.5" fill="#f28c1e" stroke="#3a2206" stroke-width="0.8"/><circle cx="27.4" cy="10.2" r="2.5" fill="#f28c1e" stroke="#3a2206" stroke-width="0.8"/></svg><svg style="left:1px;top:265px" width="35" height="35" viewBox="0 0 35 35"><polygon points="15.7,3.8 28.8,9.3 15.7,15.2 4.85,9.3" fill="#8e8e8e" stroke="#1c1c1c" stroke-width="1" stroke-linejoin="round" /><polygon points="4.85,9.3 15.7,15.2 15.7,29.4 5.7,23.5" fill="#747474" stroke="#1c1c1c" stroke-width="1" stroke-linejoin="round" /><polygon points="15.7,15.2 28.8,9.3 28.8,22.7 15.7,29.4" fill="#585858" stroke="#1c1c1c" stroke-width="1" stroke-linejoin="round" /><path d="M4.85,9.3L15.7,3.8M15.7,15.2L28.8,9.3" stroke="#f28c1e" stroke-width="1.8"/></svg><svg style="left:1px;top:301px" width="35" height="35" viewBox="0 0 35 35"><polygon points="15.7,4.3 28.8,9.3 15.7,15 5.4,9.3" fill="#8e8e8e" stroke="#1c1c1c" stroke-width="1" stroke-linejoin="round" /><polygon points="5.4,9.3 15.7,15 15.7,29.4 5.7,23.5" fill="#747474" stroke="#1c1c1c" stroke-width="1" stroke-linejoin="round" /><polygon points="15.7,15 28.8,9.3 28.8,22.7 15.7,29.4" fill="#585858" stroke="#1c1c1c" stroke-width="1" stroke-linejoin="round" /><polygon points="15.7,4.3 28.8,9.3 15.7,15 5.4,9.3" fill="#f28c1e" stroke="#1c1c1c" stroke-width="1" stroke-linejoin="round" /></svg><div class="grp" style="left:1px;top:347px;width:35px;height:107px"><div class="on" style="left:0;top:36px;width:35px;height:35px"></div><div class="on" style="left:0;top:72px;width:35px;height:35px"></div><div class="sep" style="left:0;top:35px;width:35px;height:1px"></div><div class="sep" style="left:0;top:71px;width:35px;height:1px"></div></div><svg style="left:1px;top:347px" width="35" height="35" viewBox="0 0 35 35"><path d="M8.2,9V25.2H26" fill="none" stroke="#2a1a06" stroke-width="4.2"/><path d="M8.2,9V25.2H26" fill="none" stroke="#f28c1e" stroke-width="2.6"/><polygon points="8.2,4.2 11.8,10 4.6,10" fill="#f28c1e" stroke="#2a1a06" stroke-width="0.8" stroke-linejoin="round" /><polygon points="30.4,25.2 24.6,21.6 24.6,28.8" fill="#f28c1e" stroke="#2a1a06" stroke-width="0.8" stroke-linejoin="round" /></svg><svg style="left:1px;top:383px" width="35" height="35" viewBox="0 0 35 35"><path d="M2.6,14.6 C7,17.5 9.5,15.5 11,11 C12.5,6 16.5,3.4 20.5,5.2 C23.5,6.6 25.2,8 25.3,10.5" fill="none" stroke="#16202e" stroke-width="1.4"/><rect x="19" y="9.6" width="12.8" height="20.2" rx="6" fill="#f28c1e" stroke="#2a1a06" stroke-width="1.1"/><path d="M19,17.4H31.8M25.4,9.6V17.4" stroke="#2a1a06" stroke-width="1"/></svg><svg style="left:1px;top:419px" width="35" height="35" viewBox="0 0 35 35"><circle cx="17" cy="16.25" r="12.4" fill="#8c8c8c" stroke="#222" stroke-width="1.2"/><path d="M17,4V28.5M4.8,16.25H29.2" stroke="#707070" stroke-width="1"/><text x="17" y="22.3" text-anchor="middle" font-family="Liberation Sans,sans-serif" font-weight="bold" font-size="17.5" fill="#141414" stroke="#141414" stroke-width="0.7">S</text><path d="M33.5 29.5L33.5 33.5L29.5 33.5z" fill="#111"/></svg><div class="grp" style="left:1px;top:465px;width:35px;height:35px"></div><svg style="left:1px;top:465px" width="35" height="35" viewBox="0 0 35 35"><g transform="rotate(-45 17.5 17) translate(0,1.5) scale(0.92) translate(1.5,1)"><path d="M6,5 H13 V17 A4.5,4.5 0 0 0 22,17 V5 H29 V17 A11.5,11.5 0 0 1 6,17 Z" fill="#f28c1e" stroke="#2a1a06" stroke-width="1"/><rect x="6" y="4" width="7" height="6.5" fill="#1a1a1a"/><rect x="22" y="4" width="7" height="6.5" fill="#1a1a1a"/></g><path d="M33.5 29.5L33.5 33.5L29.5 33.5z" fill="#111"/></svg><div class="grp" style="left:1px;top:511px;width:35px;height:71px"><div class="on" style="left:0;top:0px;width:35px;height:35px"></div><div class="sep" style="left:0;top:35px;width:35px;height:1px"></div></div><svg style="left:1px;top:511px" width="35" height="35" viewBox="0 0 35 35"><path d="M2.8,10L19,20.4" stroke="#161616" stroke-width="1.1"/><path d="M2.8,10L16,1.6" stroke="#161616" stroke-width="1.1"/><path d="M6.1,7.9L22.35,17.8" stroke="#161616" stroke-width="1.1"/><path d="M6.85,12.6L20.1,3.7" stroke="#161616" stroke-width="1.1"/><path d="M9.4,5.8L25.7,15.2" stroke="#161616" stroke-width="1.1"/><path d="M10.9,15.2L24.2,5.8" stroke="#161616" stroke-width="1.1"/><path d="M12.7,3.7L29.05,12.6" stroke="#161616" stroke-width="1.1"/><path d="M14.95,17.8L28.3,7.9" stroke="#161616" stroke-width="1.1"/><path d="M16,1.6L32.4,10" stroke="#161616" stroke-width="1.1"/><path d="M19,20.4L32.4,10" stroke="#161616" stroke-width="1.1"/><path d="M24,24V21.6A3.6,3.6 0 0 1 31.2,21.6V24" fill="none" stroke="#161616" stroke-width="1.8"/><rect x="21.6" y="23.6" width="12" height="9" rx="1" fill="#161616"/><polygon points="28.5,28 33,28 33,32" fill="#e8e8e8" /></svg><svg style="left:1px;top:547px" width="35" height="35" viewBox="0 0 35 35"><path d="M2.8,10L19,20.4" stroke="#161616" stroke-width="1.1"/><path d="M2.8,10L17,1.8" stroke="#161616" stroke-width="1.1"/><path d="M6.35,7.95L22.35,18.05" stroke="#161616" stroke-width="1.1"/><path d="M6.85,12.6L20.85,4.1" stroke="#161616" stroke-width="1.1"/><path d="M9.9,5.9L25.7,15.7" stroke="#161616" stroke-width="1.1"/><path d="M10.9,15.2L24.7,6.4" stroke="#161616" stroke-width="1.1"/><path d="M13.45,3.85L29.05,13.35" stroke="#161616" stroke-width="1.1"/><path d="M14.95,17.8L28.55,8.7" stroke="#161616" stroke-width="1.1"/><path d="M17,1.8L32.4,11" stroke="#161616" stroke-width="1.1"/><path d="M19,20.4L32.4,11" stroke="#161616" stroke-width="1.1"/><path d="M24.00,18.20 A5.6,5.6 0 0 0 19.35,26.60" fill="none" stroke="#33240a" stroke-width="4.2"/><path d="M24.00,18.20 A5.6,5.6 0 0 0 19.35,26.60" fill="none" stroke="#f28c1e" stroke-width="2.7"/><polygon points="16.6612,28.1525 24.6919,29.2659 22.0393,25.0475" fill="#f28c1e" stroke="#33240a" stroke-width="0.8" stroke-linejoin="round" /><path d="M19.21,26.34 L19.45,26.77" stroke="#f28c1e" stroke-width="2.7"/><path d="M24.40,29.40 A5.6,5.6 0 0 0 29.05,21.00" fill="none" stroke="#33240a" stroke-width="4.2"/><path d="M24.40,29.40 A5.6,5.6 0 0 0 29.05,21.00" fill="none" stroke="#f28c1e" stroke-width="2.7"/><polygon points="31.7388,19.4475 23.7081,18.3341 26.3607,22.5525" fill="#f28c1e" stroke="#33240a" stroke-width="0.8" stroke-linejoin="round" /><path d="M29.19,21.26 L28.95,20.83" stroke="#f28c1e" stroke-width="2.7"/><path d="M33.5 29.5L33.5 33.5L29.5 33.5z" fill="#111"/></svg><div class="b" style="left:39px;top:64px;width:1228px;height:1px;background:#626262"></div><div class="b" style="left:39px;top:64px;width:1px;height:752px;background:#626262"></div><svg style="left:45px;top:69px" width="12" height="12"><rect width="12" height="12" fill="url(#gp)"/></svg><span class="t" style="left:66.25px;top:69.02px;letter-spacing:-0.268px;">Вид</span><span class="t" style="left:100.5px;top:69.02px;letter-spacing:-0.343px;">Камеры</span><span class="t" style="left:155px;top:69.02px;letter-spacing:-0.186px;">Представление</span><span class="t" style="left:250.5px;top:69.02px;letter-spacing:0.068px;">Настройки</span><span class="t" style="left:322px;top:69.02px;letter-spacing:0.103px;">Фильтр индикации</span><span class="t" style="left:437px;top:69.02px;letter-spacing:-0.152px;">Панели</span><svg style="left:1200px;top:67.5px" width="14" height="14" viewBox="0 0 14 14"><path d="M7,0.6L9.3,3.6H4.7z" fill="#1e1e1e" transform="rotate(0 7 7)"/><rect x="6.4" y="3.4" width="1.2" height="2.2" fill="#1e1e1e" transform="rotate(0 7 7)"/><path d="M7,0.6L9.3,3.6H4.7z" fill="#1e1e1e" transform="rotate(90 7 7)"/><rect x="6.4" y="3.4" width="1.2" height="2.2" fill="#1e1e1e" transform="rotate(90 7 7)"/><path d="M7,0.6L9.3,3.6H4.7z" fill="#1e1e1e" transform="rotate(180 7 7)"/><rect x="6.4" y="3.4" width="1.2" height="2.2" fill="#1e1e1e" transform="rotate(180 7 7)"/><path d="M7,0.6L9.3,3.6H4.7z" fill="#1e1e1e" transform="rotate(270 7 7)"/><rect x="6.4" y="3.4" width="1.2" height="2.2" fill="#1e1e1e" transform="rotate(270 7 7)"/></svg><svg style="left:1217.5px;top:67.5px" width="12" height="14" viewBox="0 0 12 14"><path d="M6,0.4L8.4,3.6H3.6z" fill="#1e1e1e"/><rect x="5.3" y="3.4" width="1.4" height="6" fill="#1e1e1e"/><path d="M0.6,8.2H11.4L6,13.6z" fill="#1e1e1e"/></svg><svg style="left:1233.5px;top:67.5px" width="13" height="14" viewBox="0 0 13 14"><path d="M6.5,1.6A5.2,5.2 0 0 0 2.2,10" fill="none" stroke="#1e1e1e" stroke-width="1.5"/><path d="M6.5,12.4A5.2,5.2 0 0 0 10.8,4" fill="none" stroke="#1e1e1e" stroke-width="1.5"/><path d="M5.8,-0.4L9,1.8L5.8,3.8z" fill="#1e1e1e"/><path d="M7.2,14.4L4,12.2L7.2,10.2z" fill="#1e1e1e"/><circle cx="6.5" cy="7" r="1.3" fill="#1e1e1e"/></svg><svg style="left:1250.3px;top:67.6px" width="13.5" height="13.5" viewBox="0 0 13.5 13.5"><rect x="0.7" y="0.7" width="12.1" height="12.1" rx="1.5" fill="none" stroke="#2a2a2a" stroke-width="1.4"/><path d="M0.7,3.2H12.8" stroke="#2a2a2a" stroke-width="1.6"/><rect x="1.4" y="6.4" width="5.2" height="6" fill="#3c3c3c"/></svg><div class="b" id="vp" style="left:40px;top:85px;width:1226px;height:731px;border:1px solid #a8a8a8;box-shadow:1px 1px 0 #3a3a3a;overflow:hidden;background:#767676"><svg style="left:-41px;top:-86px" width="1920" height="1017" viewBox="0 0 1920 1017"><defs>
<linearGradient id="vpg" x1="0" y1="86" x2="0" y2="815" gradientUnits="userSpaceOnUse"><stop offset="0" stop-color="#888888"/><stop offset="1" stop-color="#626262"/></linearGradient>
<linearGradient id="pin1" x1="494" y1="178" x2="475" y2="206" gradientUnits="userSpaceOnUse"><stop offset="0" stop-color="#848484"/><stop offset=".07" stop-color="#7a7a7a"/><stop offset=".3" stop-color="#707070"/><stop offset=".6" stop-color="#666666"/><stop offset=".9" stop-color="#585858"/><stop offset="1" stop-color="#5e5e5e"/></linearGradient>
<linearGradient id="pin2" x1="571" y1="169" x2="551" y2="198" gradientUnits="userSpaceOnUse"><stop offset="0" stop-color="#848484"/><stop offset=".07" stop-color="#7a7a7a"/><stop offset=".3" stop-color="#707070"/><stop offset=".6" stop-color="#666666"/><stop offset=".9" stop-color="#585858"/><stop offset="1" stop-color="#5e5e5e"/></linearGradient>
<radialGradient id="cap1" cx="481" cy="190" r="18" gradientUnits="userSpaceOnUse"><stop offset="0" stop-color="#858585"/><stop offset=".6" stop-color="#7e7e7e"/><stop offset="1" stop-color="#747474" stop-opacity="0"/></radialGradient>
<radialGradient id="cap2" cx="558" cy="182" r="18" gradientUnits="userSpaceOnUse"><stop offset="0" stop-color="#858585"/><stop offset=".6" stop-color="#7e7e7e"/><stop offset="1" stop-color="#747474" stop-opacity="0"/></radialGradient>
<linearGradient id="face" x1="560" y1="180" x2="650" y2="380" gradientUnits="userSpaceOnUse"><stop offset="0" stop-color="#cecece"/><stop offset="1" stop-color="#bfbfbf"/></linearGradient>
<linearGradient id="shade" x1="722" y1="160" x2="790" y2="215" gradientUnits="userSpaceOnUse"><stop offset="0" stop-color="#666666"/><stop offset=".5" stop-color="#797979"/><stop offset="1" stop-color="#9c9c9c"/></linearGradient>
<linearGradient id="under" x1="610" y1="355" x2="668" y2="440" gradientUnits="userSpaceOnUse"><stop offset="0" stop-color="#bebebe"/><stop offset=".45" stop-color="#b5b5b5"/><stop offset=".8" stop-color="#a6a6a6"/><stop offset="1" stop-color="#8c8c8c"/></linearGradient>
<linearGradient id="neckL" x1="640" y1="0" x2="708" y2="0" gradientUnits="userSpaceOnUse"><stop offset="0" stop-color="#c2c2c2"/><stop offset=".7" stop-color="#cccccc"/><stop offset="1" stop-color="#c0c0c0"/></linearGradient>
<linearGradient id="neckS" x1="672" y1="437.5" x2="670" y2="458" gradientUnits="userSpaceOnUse"><stop offset="0" stop-color="#000" stop-opacity=".32"/><stop offset=".5" stop-color="#000" stop-opacity=".12"/><stop offset="1" stop-color="#000" stop-opacity="0"/></linearGradient>
<linearGradient id="fil" x1="680" y1="422" x2="675" y2="440" gradientUnits="userSpaceOnUse"><stop offset="0" stop-color="#a6a6a6"/><stop offset="1" stop-color="#878787"/></linearGradient>
<linearGradient id="neck" x1="640" y1="480" x2="770" y2="500" gradientUnits="userSpaceOnUse"><stop offset="0" stop-color="#c6c6c6"/><stop offset=".4" stop-color="#cbcbcb"/><stop offset=".47" stop-color="#b4b4b4"/><stop offset="1" stop-color="#adadad"/></linearGradient>
<linearGradient id="cable" x1="640" y1="700" x2="690" y2="710" gradientUnits="userSpaceOnUse"><stop offset="0" stop-color="#d4d4d4"/><stop offset=".35" stop-color="#d8d8d8"/><stop offset=".85" stop-color="#b8b8b8"/><stop offset=".97" stop-color="#8a8a8a"/><stop offset="1" stop-color="#555"/></linearGradient>
<linearGradient id="rib" x1="787" y1="380" x2="806" y2="385" gradientUnits="userSpaceOnUse"><stop offset="0" stop-color="#d8d8d8"/><stop offset=".45" stop-color="#d9d9d9"/><stop offset=".8" stop-color="#c2c2c2"/><stop offset="1" stop-color="#a8a8a8"/></linearGradient>
<linearGradient id="grv" x1="727" y1="298.5" x2="724" y2="305" gradientUnits="userSpaceOnUse"><stop offset="0" stop-color="#b4b4b4"/><stop offset=".45" stop-color="#8a8a8a"/><stop offset="1" stop-color="#6e6e6e"/></linearGradient>
</defs><rect x="41" y="86" width="1225" height="729" fill="url(#vpg)"/><rect x="41" y="86" width="1225" height="34" fill="#000" opacity=".045"/><rect x="41" y="782" width="1225" height="33" fill="#000" opacity=".075"/><polygon points="760,196 773.7,206.7 808,234 816,290 823,342 792,449 780,500 764.5,550.5 695,535 708,487 710.8,456 703.3,438.3 661.2,437 666.6,417.6 700,300" fill="#b3b3b3"/><path d="M805,307 C812,308 819,318 820,334 L788,452 L786.7,455 L765,449 Z" fill="url(#rib)"/><path d="M820,334 L822,342 L790.5,456.5 L786.7,455 L788,452 Z" fill="#8c8c8c"/><path d="M685,141 C697,141 708,150 716,157 L773.7,206.7 C781,217 784,228 784.5,240 L781.6,236 L723.6,195 C724,178 718,160 705,148 Z" fill="url(#shade)"/><polygon points="723.6,195 781.6,236 783.5,252 781.6,267.7 775.7,287.3 710.8,243 703,242" fill="#b3b3b3"/><polygon points="710.8,243 775.7,287.3 775,289.3 710,245" fill="#a2a2a2"/><polygon points="710,245 775,289.3 762,326.7 694,279 689,277 703,242" fill="#b7b7b7"/><polygon points="694,276.5 763.5,323 760,331 692,283.5" fill="url(#grv)"/><polygon points="692,283.5 760,331 740,362 720,386 667,417 663,325 683.7,283.5" fill="#adadad"/><path d="M565,376 L600,340 L655,305 L692,283.5 L760,331 C745,362 715,395 666.7,416.7 L660,437 L555,380 Z" fill="url(#under)"/><path d="M784.5,240 C783,262 778,285 757,335 C735,372 705,400 666.7,416.7" fill="none" stroke="#6e6e6e" stroke-width="1"/><polygon points="555,380 573,380 660,432 660,437" fill="#d0d0d0"/><path d="M661.7,143.3 L677.5,155 L685,141 C700,142 716,158 721,178 L723.6,195 L703,242 L689,277 L668,320 C655,335 625,362 573,380 L555,380 C540,370 530,352 527.5,330 C527,312 532,296 540,280 L546.7,274 L541.7,271 L546.7,258 C560,235 580,205 600,182 C620,163 640,150 661.7,143.3 Z" fill="url(#face)"/><path d="M668,320 C655,335 625,362 575,379.5" fill="none" stroke="#d4d4d4" stroke-width="1.3"/><path d="M685,141 C700,142 716,158 721,178 L723.6,195 L703,242 L689,277 L668,320 L660,318 L682,272 L696,238 L714,194 C712,175 700,158 683,150 Z" fill="#c3c3c3"/><polygon points="648.5,162.8 652,160 677.7,158.3 678.6,163.6 673.3,183 661.8,207.9 656.5,223.8 652,225.6 646.7,218.5 637,206 636.1,183 640.5,170.7" fill="#858585"/><polygon points="648.5,162.8 652,160 677.7,158.3 678.6,163.6 651,166.5" fill="#929292"/><polygon points="661.8,207.9 656.5,223.8 652,225.6 651,221 657,207" fill="#959595"/><ellipse cx="648.8" cy="193.5" rx="10" ry="17.5" transform="rotate(22 648.8 193.5)" fill="#989898"/><ellipse cx="649.6" cy="192.6" rx="8" ry="15.6" transform="rotate(22 649.6 192.6)" fill="#828282"/><path d="M648,178.5 C651,175.6 656,175.6 658,178" fill="none" stroke="#c4c4c4" stroke-width="1.4"/><path d="M647.4,180.4 C650.4,177.4 655.6,177.4 657.6,179.8" fill="none" stroke="#5e5e5e" stroke-width="1"/><polygon points="566.7,338 595,341.7 588,358 580,361.7 576,374 559,357.5" fill="#848484"/><polygon points="563,357 586,359 580,361.7 576,374" fill="#6c6c6c"/><rect x="41" y="258" width="507" height="1" fill="#322aa6"/><rect x="588" y="258" width="30" height="1" fill="#74768a"/><rect x="811" y="258" width="455" height="1" fill="#b42e2e"/><rect x="618" y="86" width="1" height="125" fill="#2f9e33"/><rect x="618" y="211" width="1" height="47" fill="#748078"/><rect x="617" y="257" width="2" height="2" fill="#3a3a3a"/><path d="M494.5,178 L588,245 C592,250 590,262 572,271 L476,206 A17,17 0 0 1 494.5,178 Z" fill="url(#pin1)"/><circle cx="485" cy="192" r="17" fill="url(#pin1)"/><circle cx="483" cy="191" r="15" fill="url(#cap1)"/><path d="M571,169 L673.3,246.7 C676,254 672,266 652,272.5 L551,198 A17,17 0 0 1 571,169 Z" fill="url(#pin2)"/><circle cx="561" cy="184" r="17" fill="url(#pin2)"/><circle cx="559" cy="183" r="15" fill="url(#cap2)"/><path d="M645,438.2 L661.2,437 L703.3,438.3 C708,443 711,450 710.8,456 C710.5,470 709,480 708.3,486.7 L700,523.3 L695,535 L636,522 Z" fill="url(#neckL)"/><path d="M645,438.2 L661.2,437 L703.3,438.3 C708,443 711,450 710.8,456 C710.5,470 709,480 708.3,486.7 L700,523.3 L695,535 L636,522 Z" fill="url(#neckS)"/><path d="M661.2,437 L666.6,417.6 L704,440.3 L703.3,438.3 Z" fill="url(#fil)"/><path d="M703.3,438.3 C708,443 711,450 710.8,456 C710.5,470 709,480 708.3,486.7 L700,523.3 L695,535 L698.5,536 L704,523.5 L712.5,487 C713.5,478 714.5,462 714,455 C713.6,449 709,442 704,440.3 Z" fill="#bababa"/><polygon points="658,528 734,550 716,640 640,620" fill="#c3c3c3"/><polygon points="633,533 659,540 658,551 632,544" fill="#c8c8c8"/><polygon points="629.3,554 655.3,561 654.3,572 628.3,565" fill="#c8c8c8"/><polygon points="625.6,575 651.6,582 650.6,593 624.6,586" fill="#c8c8c8"/><polygon points="621.9,596 647.9,603 646.9,614 620.9,607" fill="#c8c8c8"/><polygon points="618.2,617 644.2,624 643.2,635 617.2,628" fill="#c8c8c8"/><polygon points="636,523 660,530 659,540 634,533" fill="#737373"/><polygon points="632.3,544 656.3,551 655.3,561 630.3,554" fill="#737373"/><polygon points="628.6,565 652.6,572 651.6,582 626.6,575" fill="#737373"/><polygon points="624.9,586 648.9,593 647.9,603 622.9,596" fill="#737373"/><polygon points="621.2,607 645.2,614 644.2,624 619.2,617" fill="#737373"/><polygon points="734,557 759,560 757,571 732,568" fill="#c0c0c0"/><polygon points="729.8,578 754.8,581 752.8,592 727.8,589" fill="#c0c0c0"/><polygon points="725.6,599 750.6,602 748.6,613 723.6,610" fill="#c0c0c0"/><polygon points="721.4,620 746.4,623 744.4,634 719.4,631" fill="#c0c0c0"/><polygon points="717.2,641 742.2,644 740.2,655 715.2,652" fill="#c0c0c0"/><polygon points="737,547 761,550 759,559 735,556" fill="#707070"/><polygon points="732.8,568 756.8,571 754.8,580 730.8,577" fill="#707070"/><polygon points="728.6,589 752.6,592 750.6,601 726.6,598" fill="#707070"/><polygon points="724.4,610 748.4,613 746.4,622 722.4,619" fill="#707070"/><polygon points="720.2,631 744.2,634 742.2,643 718.2,640" fill="#707070"/><polygon points="667,531 723,543 721,555 665,542" fill="#9c9c9c"/><polygon points="682,534 708,540 706,550 680,544" fill="#e6e6e6"/><polygon points="708,540 722,543 720,553 706,550" fill="#cfcfcf"/><polygon points="665,542 721,555 720,558 665,545" fill="#7a7a7a"/><polygon points="663.4,552.3 719.4,564.3 717.4,576.3 661.4,563.3" fill="#9c9c9c"/><polygon points="678.4,555.3 704.4,561.3 702.4,571.3 676.4,565.3" fill="#e6e6e6"/><polygon points="704.4,561.3 718.4,564.3 716.4,574.3 702.4,571.3" fill="#cfcfcf"/><polygon points="661.4,563.3 717.4,576.3 716.4,579.3 661.4,566.3" fill="#7a7a7a"/><polygon points="659.8,573.6 715.8,585.6 713.8,597.6 657.8,584.6" fill="#9c9c9c"/><polygon points="674.8,576.6 700.8,582.6 698.8,592.6 672.8,586.6" fill="#e6e6e6"/><polygon points="700.8,582.6 714.8,585.6 712.8,595.6 698.8,592.6" fill="#cfcfcf"/><polygon points="657.8,584.6 713.8,597.6 712.8,600.6 657.8,587.6" fill="#7a7a7a"/><polygon points="656.2,594.9 712.2,606.9 710.2,618.9 654.2,605.9" fill="#9c9c9c"/><polygon points="671.2,597.9 697.2,603.9 695.2,613.9 669.2,607.9" fill="#e6e6e6"/><polygon points="697.2,603.9 711.2,606.9 709.2,616.9 695.2,613.9" fill="#cfcfcf"/><polygon points="654.2,605.9 710.2,618.9 709.2,621.9 654.2,608.9" fill="#7a7a7a"/><polygon points="652.6,616.2 708.6,628.2 706.6,640.2 650.6,627.2" fill="#9c9c9c"/><polygon points="667.6,619.2 693.6,625.2 691.6,635.2 665.6,629.2" fill="#e6e6e6"/><polygon points="693.6,625.2 707.6,628.2 705.6,638.2 691.6,635.2" fill="#cfcfcf"/><polygon points="650.6,627.2 706.6,640.2 705.6,643.2 650.6,630.2" fill="#7a7a7a"/><polygon points="620,616 669,634 668,659 618.4,640.7" fill="#c4c4c4"/><polygon points="669,634 737,642 730,666 668,659" fill="#b2b2b2"/><path d="M645,656.7 L628.5,737.7 C640,748 665,754 680.8,751 L696.7,666 Z" fill="url(#cable)"/><path d="M74,780.5V764" stroke="#3fd34a" stroke-width="1.3"/><path d="M74,780.5L88.5,779" stroke="#e04444" stroke-width="1.3"/><path d="M74,780.5L64,778.5" stroke="#3a3fd8" stroke-width="1.3"/><text x="70.5" y="761" font-family="Liberation Sans,sans-serif" font-size="9" fill="#3fd34a">Y</text><text x="91" y="783" font-family="Liberation Sans,sans-serif" font-size="9" fill="#e04444">X</text><text x="52" y="782" font-family="Liberation Sans,sans-serif" font-size="9" fill="#3a3fd8">Z</text></svg><div class="b" style="left:2px;top:2px;width:73px;height:15px;background:rgba(60,60,60,.24);border-radius:2px"></div><span class="t" style="left:4.5px;top:3.02px;color:#e8e8e8;letter-spacing:-0.060px;">Перспектива</span><div class="b" style="left:2px;top:30px;width:94px;height:38px;background:rgba(60,60,60,.27);border-radius:2px"></div><span class="t" style="left:64.5px;top:32.02px;color:#e0e0e0;letter-spacing:-0.191px;">Всего</span><span class="t" style="left:4.5px;top:51.02px;color:#e0e0e0;letter-spacing:-0.104px;">Объекты</span><span class="t" style="left:64.6px;top:51.02px;color:#e0e0e0;letter-spacing:-0.746px;">14</span><div class="b" style="left:1071px;top:711.5px;width:150px;height:15.5px;background:rgba(60,60,60,.3);border-radius:2px"></div><span class="t" style="left:1073px;top:712.02px;color:#e0e0e0;letter-spacing:-0.197px;">Интервал растра : 0.01 cm</span></div><div class="b" style="left:1270px;top:25px;width:629px;height:791px;border:1px solid #626262;background:#484848"></div><svg style="left:1276px;top:30px" width="12" height="12"><rect width="12" height="12" fill="url(#gp)"/></svg><span class="t" style="left:1296.9px;top:30.02px;letter-spacing:-0.668px;">Файл</span><span class="t" style="left:1337.25px;top:30.02px;letter-spacing:-0.083px;">Правка</span><span class="t" style="left:1390.4px;top:30.02px;letter-spacing:-0.402px;">Вид</span><span class="t" style="left:1424.3px;top:30.02px;letter-spacing:0.039px;">Объекты</span><span class="t" style="left:1485.8px;top:30.02px;letter-spacing:-0.048px;">Теги</span><span class="t" style="left:1523px;top:30.02px;letter-spacing:-0.287px;">Закладка</span><svg style="left:1826px;top:28px" width="14" height="16" viewBox="0 0 14 16"><circle cx="5" cy="5.4" r="3.7" fill="#5c5c5c" stroke="#1a1a1a" stroke-width="1.3"/><path d="M7.6,8.4L12.4,14.6" stroke="#1a1a1a" stroke-width="2.1" stroke-linecap="round"/></svg><svg style="left:1844px;top:28.5px" width="16" height="15" viewBox="0 0 16 15"><path d="M8,1.2L14.8,8H12.2V13.6H3.8V8H1.2Z" fill="#4a4a4a" stroke="#151515" stroke-width="1.5" stroke-linejoin="miter"/></svg><svg style="left:1864px;top:32px" width="15" height="9" viewBox="0 0 15 9"><path d="M0.8,4.5C4,0.8 11,0.8 14.2,4.5C11,8.2 4,8.2 0.8,4.5Z" fill="none" stroke="#2e2e2e" stroke-width="1"/></svg><svg style="left:1883.5px;top:28px" width="12" height="16" viewBox="0 0 12 16"><rect x="0.6" y="0.6" width="10.8" height="14.4" fill="#4c4c4c" stroke="#1c1c1c" stroke-width="1.1"/><rect x="0.6" y="0.6" width="10.8" height="2.2" fill="#1c1c1c"/><path d="M6,5.4V12.6M2.4,9H9.6" stroke="#151515" stroke-width="1.5"/></svg><div class="b" style="left:1271px;top:48px;width:627px;height:1px;background:#626262"></div><div class="b" style="left:1271px;top:49px;width:627px;height:766px;border:1px solid #303030;border-bottom-color:#5c5c5c;border-right-color:#5c5c5c;background:#474747"></div><div class="b" style="left:1273px;top:50px;width:624px;height:20px;background:#505050"></div><span class="t" style="left:1307.4px;top:54.02px;color:#d2d2d2;letter-spacing:-0.742px;">Scene</span><svg style="left:1286.4px;top:52px" width="17" height="16" viewBox="0 0 17 16"><path d="M5,3V13.4H14.6" fill="none" stroke="#f4f4f4" stroke-width="1.4"/><text x="9.6" y="10" font-family="Liberation Sans,sans-serif" font-weight="bold" font-size="10.5" fill="#bfe0fb" stroke="#bfe0fb" stroke-width="0.4">0</text></svg><div class="b" style="left:1446.7px;top:53.7px;width:12.6px;height:12.6px;background:#ffdc14;border-radius:2px"></div><div class="b" style="left:1464.2px;top:54.1px;width:4.6px;height:4.6px;background:#808080;border-radius:50%"></div><div class="b" style="left:1464.2px;top:62.1px;width:4.6px;height:4.6px;background:#808080;border-radius:50%"></div><div class="b" style="left:1273px;top:70px;width:624px;height:20px;background:#474747"></div><span class="t" style="left:1318.4px;top:74.02px;color:#d2d2d2;letter-spacing:-0.617px;">Camera</span><svg style="left:1298.4px;top:75px" width="17" height="15" viewBox="0 0 17 15"><rect x="3.4" y="8.6" width="9.6" height="5" rx="0.8" fill="#101010"/><path d="M13,11L16.4,8.6V13.6z" fill="#101010"/><circle cx="5" cy="5.4" r="2.7" fill="#101010"/><circle cx="10.4" cy="4.4" r="3.3" fill="#101010"/><circle cx="5" cy="5.4" r="1.6" fill="#d6ecff"/><circle cx="10.4" cy="4.4" r="2.1" fill="#d6ecff"/><circle cx="5.1" cy="5.5" r="0.7" fill="#223"/><circle cx="10.5" cy="4.5" r="0.9" fill="#223"/><rect x="4.3" y="10.2" width="2.8" height="2.2" fill="#f0f0f0"/></svg><div class="b" style="left:1446.7px;top:73.7px;width:12.6px;height:12.6px;background:#ffdc14;border-radius:2px"></div><div class="b" style="left:1464.2px;top:74.1px;width:4.6px;height:4.6px;background:#ee5a64;border-radius:50%"></div><div class="b" style="left:1464.2px;top:82.1px;width:4.6px;height:4.6px;background:#ee5a64;border-radius:50%"></div><svg style="left:1472px;top:74px" width="9.5" height="9.5" viewBox="0 0 9.5 9.5"><path d="M1,3.4V1H3.4M6,1H8.4V3.4M8.4,6V8.4H6M3.4,8.4H1V6" fill="none" stroke="#1a1a1a" stroke-width="1.3"/><rect x="4" y="4" width="1.6" height="1.6" fill="#1a1a1a"/></svg><svg style="left:1486px;top:71.7px" width="15" height="15" viewBox="0 0 15 15"><circle cx="7.4" cy="7.4" r="6.2" fill="#e89a3c" stroke="#1e1208" stroke-width="1.4"/><path d="M3,3.2L11.8,11.6" stroke="#1e1208" stroke-width="2"/></svg><div class="b" style="left:1273px;top:90px;width:624px;height:20px;background:#505050"></div><span class="t" style="left:1318.4px;top:94.02px;color:#d2d2d2;letter-spacing:0.092px;">Background</span><svg style="left:1298.4px;top:92px" width="18" height="16" viewBox="0 0 18 16"><rect x="5" y="2" width="12" height="8" fill="#bfe0ff"/><rect x="5" y="2" width="12" height="1.2" fill="#7aa6d8"/><polygon points="6.8,7 10.6,8.8 6.6,10.6 2.6,8.8" fill="#fafafa" stroke="#8a8a8a" stroke-width="0.4" stroke-linejoin="round" /><polygon points="2.6,8.8 6.6,10.6 6.4,15.4 2.6,13.2" fill="#e6e6e6" stroke="#8a8a8a" stroke-width="0.4" stroke-linejoin="round" /><polygon points="6.6,10.6 10.6,8.8 10.6,13.2 6.4,15.4" fill="#c0c0c0" stroke="#8a8a8a" stroke-width="0.4" stroke-linejoin="round" /></svg><div class="b" style="left:1446.7px;top:93.7px;width:12.6px;height:12.6px;background:#ffdc14;border-radius:2px"></div><div class="b" style="left:1464.2px;top:94.1px;width:4.6px;height:4.6px;background:#808080;border-radius:50%"></div><div class="b" style="left:1464.2px;top:102.1px;width:4.6px;height:4.6px;background:#808080;border-radius:50%"></div><svg style="left:1487px;top:92.8px" width="14" height="14" viewBox="0 0 14 14"><rect x="1.6" y="7.4" width="11.4" height="5.4" fill="#e8963a"/><path d="M5.6,8.4L9.4,10.1L5.6,11.8L6.6,10.1z" fill="#2a1606"/><rect x="1.2" y="4.6" width="12" height="2.4" fill="#222"/><path d="M1,2.6L12.6,0.6L13,2.8L1.4,4.6z" fill="#222"/><path d="M2.6,4.6h1.5l-0.8,2.4h-1.5z" fill="#eee"/><path d="M2.2,2.4l1.5,-0.26l0.3,1.9l-1.5,0.26z" fill="#eee"/><path d="M5.6,4.6h1.5l-0.8,2.4h-1.5z" fill="#eee"/><path d="M5.2,1.9l1.5,-0.26l0.3,1.9l-1.5,0.26z" fill="#eee"/><path d="M8.6,4.6h1.5l-0.8,2.4h-1.5z" fill="#eee"/><path d="M8.2,1.4l1.5,-0.26l0.3,1.9l-1.5,0.26z" fill="#eee"/><path d="M11.6,4.6h1.5l-0.8,2.4h-1.5z" fill="#eee"/><path d="M11.2,0.9l1.5,-0.26l0.3,1.9l-1.5,0.26z" fill="#eee"/></svg><svg style="left:1504px;top:90.2px" width="18" height="17.6" viewBox="0 0 18 17.6"><rect x="0.6" y="0.6" width="16.8" height="16.4" fill="#1b1b1b" stroke="#8c8c8c" stroke-width="1.1"/></svg><div class="b" style="left:1273px;top:110px;width:624px;height:20px;background:#474747"></div><span class="t" style="left:1318.4px;top:114.02px;color:#d2d2d2;letter-spacing:-0.857px;">Sky</span><svg style="left:1299.4px;top:112.7px" width="16" height="16" viewBox="0 0 16 16"><defs><radialGradient id="skyg" cx=".38" cy=".32" r=".75"><stop offset="0" stop-color="#cfe4fb"/><stop offset=".6" stop-color="#8fb6e6"/><stop offset="1" stop-color="#5a80b8"/></radialGradient></defs><circle cx="8" cy="8" r="6.8" fill="url(#skyg)"/><path d="M8,1.2V14.8M1.2,8H14.8M2.6,4.4H13.4M2.6,11.6H13.4M8,1.2C4,4 4,12 8,14.8M8,1.2C12,4 12,12 8,14.8" fill="none" stroke="#c8dcf4" stroke-width="0.6" opacity=".8"/></svg><div class="b" style="left:1446.7px;top:113.7px;width:12.6px;height:12.6px;background:#ffdc14;border-radius:2px"></div><div class="b" style="left:1464.2px;top:114.1px;width:4.6px;height:4.6px;background:#ee5a64;border-radius:50%"></div><div class="b" style="left:1464.2px;top:122.1px;width:4.6px;height:4.6px;background:#808080;border-radius:50%"></div><svg style="left:1487px;top:112.8px" width="14" height="14" viewBox="0 0 14 14"><rect x="1.6" y="7.4" width="11.4" height="5.4" fill="#e8963a"/><path d="M5.6,8.4L9.4,10.1L5.6,11.8L6.6,10.1z" fill="#2a1606"/><rect x="1.2" y="4.6" width="12" height="2.4" fill="#222"/><path d="M1,2.6L12.6,0.6L13,2.8L1.4,4.6z" fill="#222"/><path d="M2.6,4.6h1.5l-0.8,2.4h-1.5z" fill="#eee"/><path d="M2.2,2.4l1.5,-0.26l0.3,1.9l-1.5,0.26z" fill="#eee"/><path d="M5.6,4.6h1.5l-0.8,2.4h-1.5z" fill="#eee"/><path d="M5.2,1.9l1.5,-0.26l0.3,1.9l-1.5,0.26z" fill="#eee"/><path d="M8.6,4.6h1.5l-0.8,2.4h-1.5z" fill="#eee"/><path d="M8.2,1.4l1.5,-0.26l0.3,1.9l-1.5,0.26z" fill="#eee"/><path d="M11.6,4.6h1.5l-0.8,2.4h-1.5z" fill="#eee"/><path d="M11.2,0.9l1.5,-0.26l0.3,1.9l-1.5,0.26z" fill="#eee"/></svg><svg style="left:1504px;top:109.9px" width="18" height="18" viewBox="0 0 18 18"><rect width="18" height="18" fill="#9a9a9a"/><path d="M0,18L18,0V6L6,18zM0,8L8,0H3L0,3z" fill="#b8b8b8"/><circle cx="9" cy="9" r="7" fill="#fdfdfd" stroke="#222" stroke-width="0.8"/><path d="M5,5C3,8 4,12 6.4,13.4M9,4V8L12,9.6V4.4" fill="none" stroke="#333" stroke-width="1"/><circle cx="11" cy="9.6" r="3.4" fill="#fff"/></svg><div class="b" style="left:1273px;top:130px;width:624px;height:20px;background:#505050"></div><span class="t" style="left:1307.4px;top:134.02px;color:#d2d2d2;letter-spacing:-0.702px;">Power_Plug_CEE_7_7</span><svg style="left:1286.4px;top:132px" width="17" height="16" viewBox="0 0 17 16"><path d="M5,3V13.4H14.6" fill="none" stroke="#f4f4f4" stroke-width="1.4"/><text x="9.6" y="10" font-family="Liberation Sans,sans-serif" font-weight="bold" font-size="10.5" fill="#bfe0fb" stroke="#bfe0fb" stroke-width="0.4">0</text></svg><div class="b" style="left:1446.7px;top:133.7px;width:12.6px;height:12.6px;background:#2ca4fc;border-radius:2px"></div><div class="b" style="left:1464.2px;top:134.1px;width:4.6px;height:4.6px;background:#808080;border-radius:50%"></div><div class="b" style="left:1464.2px;top:142.1px;width:4.6px;height:4.6px;background:#808080;border-radius:50%"></div><div class="b" style="left:1273px;top:150px;width:624px;height:20px;background:#474747"></div><span class="t" style="left:1318.4px;top:154.02px;color:#d2d2d2;letter-spacing:-0.702px;">Power_Plug_CEE_7_7</span><svg style="left:1299.4px;top:152px" width="17" height="17" viewBox="0 0 17 17"><rect x="3" y="3.2" width="10.6" height="10.6" rx="3.6" fill="#35d47e" stroke="#0f6a3a" stroke-width="0.8"/><path d="M5.4,6.4L12,5.2M5.4,6.4V13" stroke="#9af0c0" stroke-width="0.8" fill="none"/><rect x="1.6" y="2.2" width="1" height="1" fill="#d8d8d8"/><rect x="12" y="0.8" width="1" height="1" fill="#d8d8d8"/><rect x="15" y="4.6" width="1" height="1" fill="#d8d8d8"/><rect x="15" y="13" width="1" height="1" fill="#d8d8d8"/><rect x="5" y="15.6" width="1" height="1" fill="#d8d8d8"/><rect x="1.6" y="11.6" width="1" height="1" fill="#d8d8d8"/><rect x="8.6" y="1.4" width="1" height="1" fill="#d8d8d8"/><rect x="1.6" y="7" width="1" height="1" fill="#d8d8d8"/></svg><div class="b" style="left:1446.7px;top:153.7px;width:12.6px;height:12.6px;background:#2ca4fc;border-radius:2px"></div><div class="b" style="left:1464.2px;top:154.1px;width:4.6px;height:4.6px;background:#808080;border-radius:50%"></div><div class="b" style="left:1464.2px;top:162.1px;width:4.6px;height:4.6px;background:#808080;border-radius:50%"></div><svg style="left:1471px;top:152px" width="11" height="12" viewBox="0 0 11 12"><path d="M1.2,8.2L3.4,10.4L9.6,2.4" fill="none" stroke="#3fe070" stroke-width="1.5"/></svg><div class="b" style="left:1273px;top:170px;width:624px;height:20px;background:#505050"></div><span class="t" style="left:1329.4px;top:174.02px;color:#d2d2d2;letter-spacing:-0.702px;">Power_Plug_CEE_7_7</span><svg style="left:1308.4px;top:172px" width="17" height="16" viewBox="0 0 17 16"><path d="M5,3V13.4H14.6" fill="none" stroke="#f4f4f4" stroke-width="1.4"/><text x="9.6" y="10" font-family="Liberation Sans,sans-serif" font-weight="bold" font-size="10.5" fill="#bfe0fb" stroke="#bfe0fb" stroke-width="0.4">0</text></svg><div class="b" style="left:1446.7px;top:173.7px;width:12.6px;height:12.6px;background:#2ca4fc;border-radius:2px"></div><div class="b" style="left:1464.2px;top:174.1px;width:4.6px;height:4.6px;background:#808080;border-radius:50%"></div><div class="b" style="left:1464.2px;top:182.1px;width:4.6px;height:4.6px;background:#808080;border-radius:50%"></div><svg style="left:1484px;top:170.2px" width="18.4" height="17.6" viewBox="0 0 18.4 17.6"><defs><radialGradient id="mt1" cx=".36" cy=".34" r=".7"><stop offset="0" stop-color="#fff"/><stop offset=".45" stop-color="#d4d4d4"/><stop offset="1" stop-color="#6e6e6e"/></radialGradient></defs><svg x="0" y="0" width="18.4" height="17.6" viewBox="0 0 18.4 17.6" style="position:static;overflow:hidden"><rect width="18.4" height="17.6" fill="#8a8a8a"/><g stroke="#b2b2b2" stroke-width="2.8"><path d="M-14.4,19.6L7.2,-2"/><path d="M-8.2,19.6L13.4,-2"/><path d="M-2,19.6L19.6,-2"/><path d="M4.2,19.6L25.8,-2"/><path d="M10.4,19.6L32,-2"/><path d="M16.6,19.6L38.2,-2"/><path d="M22.8,19.6L44.4,-2"/></g></svg><circle cx="9" cy="8.8" r="7.2" fill="url(#mt1)"/><path d="M7.6,1.8C11,0.8 14.4,2.6 15.6,5.4C13.4,3.4 11,3.6 9.4,2.8z" fill="#1a1a1a"/></svg><svg style="left:1504px;top:170.2px" width="18" height="17.6" viewBox="0 0 18 17.6"><svg x="0" y="0" width="18" height="17.6" viewBox="0 0 18 17.6" style="position:static;overflow:hidden"><rect width="18" height="17.6" fill="#8a8a8a"/><g stroke="#b2b2b2" stroke-width="2.8"><path d="M-14.4,19.6L7.2,-2"/><path d="M-8.2,19.6L13.4,-2"/><path d="M-2,19.6L19.6,-2"/><path d="M4.2,19.6L25.8,-2"/><path d="M10.4,19.6L32,-2"/><path d="M16.6,19.6L38.2,-2"/><path d="M22.8,19.6L44.4,-2"/></g></svg><path d="M7,2.2C9,1 11.6,1.6 13.4,3" fill="none" stroke="#3a3a3a" stroke-width="0.9"/></svg><div class="b" style="left:1273px;top:190px;width:624px;height:20px;background:#474747"></div><span class="t" style="left:1340px;top:194.02px;color:#d2d2d2;letter-spacing:-0.154px;">Plug</span><svg style="left:1321px;top:193.6px" width="16" height="14" viewBox="0 0 16 14"><path d="M8,3.6L12.8,11.4H3.2Z" fill="#86c8fb"/><circle cx="8" cy="2" r="1.25" fill="#f6f6f6"/><circle cx="2.4" cy="12" r="1.25" fill="#f6f6f6"/><circle cx="13.6" cy="12" r="1.25" fill="#f6f6f6"/></svg><div class="b" style="left:1446.7px;top:193.7px;width:12.6px;height:12.6px;background:#2ca4fc;border-radius:2px"></div><div class="b" style="left:1464.2px;top:194.1px;width:4.6px;height:4.6px;background:#808080;border-radius:50%"></div><div class="b" style="left:1464.2px;top:202.1px;width:4.6px;height:4.6px;background:#808080;border-radius:50%"></div><svg style="left:1486.2px;top:191.9px" width="14.2" height="14.4" viewBox="0 0 14.2 14.4"><rect x="0.6" y="0.6" width="13" height="13.2" fill="#fff" stroke="#d4862e" stroke-width="1.2"/><rect x="4.15" y="1.2" width="2.95" height="3" fill="#0c0c0c"/><rect x="10.05" y="1.2" width="2.95" height="3" fill="#0c0c0c"/><rect x="1.2" y="4.2" width="2.95" height="3" fill="#0c0c0c"/><rect x="7.1" y="4.2" width="2.95" height="3" fill="#0c0c0c"/><rect x="4.15" y="7.2" width="2.95" height="3" fill="#0c0c0c"/><rect x="10.05" y="7.2" width="2.95" height="3" fill="#0c0c0c"/><rect x="1.2" y="10.2" width="2.95" height="3" fill="#0c0c0c"/><rect x="7.1" y="10.2" width="2.95" height="3" fill="#0c0c0c"/></svg><svg style="left:1505px;top:191px" width="16" height="16" viewBox="0 0 16 16"><defs><radialGradient id="phg" cx=".38" cy=".34" r=".7"><stop offset="0" stop-color="#f8b060"/><stop offset="1" stop-color="#b86410"/></radialGradient></defs><circle cx="4.4" cy="4.2" r="3.4" fill="url(#phg)"/><circle cx="11.4" cy="11.2" r="3.9" fill="url(#phg)"/></svg><svg style="left:1526.5px;top:193px" width="14.4" height="13.4" viewBox="0 0 14.4 13.4"><path d="M0.6,9L3.4,4.6L13.8,7L11.6,12.6Z" fill="#e8963a" stroke="#8a4a10" stroke-width="0.6"/><path d="M3,6.6L12.6,9.2M6.4,5.2L4.6,10.4M10,6.2L8.4,11.6" stroke="#5a2c06" stroke-width="0.8"/><path d="M5.4,0.6V7" stroke="#3a2a18" stroke-width="0.7"/><path d="M2.4,6.4l1.4,-2.6l1,3zM6,7.4l1.4,-2.8l1,3.2zM9.6,8.2l1.4,-2.6l1,3z" fill="#f4b264"/></svg><div class="b" style="left:1273px;top:210px;width:624px;height:20px;background:#505050"></div><span class="t" style="left:1340px;top:214.02px;color:#d2d2d2;letter-spacing:-0.493px;">Pins</span><svg style="left:1321px;top:213.6px" width="16" height="14" viewBox="0 0 16 14"><path d="M8,3.6L12.8,11.4H3.2Z" fill="#86c8fb"/><circle cx="8" cy="2" r="1.25" fill="#f6f6f6"/><circle cx="2.4" cy="12" r="1.25" fill="#f6f6f6"/><circle cx="13.6" cy="12" r="1.25" fill="#f6f6f6"/></svg><div class="b" style="left:1446.7px;top:213.7px;width:12.6px;height:12.6px;background:#2ca4fc;border-radius:2px"></div><div class="b" style="left:1464.2px;top:214.1px;width:4.6px;height:4.6px;background:#808080;border-radius:50%"></div><div class="b" style="left:1464.2px;top:222.1px;width:4.6px;height:4.6px;background:#808080;border-radius:50%"></div><svg style="left:1486.2px;top:211.9px" width="14.2" height="14.4" viewBox="0 0 14.2 14.4"><rect x="0.6" y="0.6" width="13" height="13.2" fill="#fff" stroke="#d4862e" stroke-width="1.2"/><rect x="4.15" y="1.2" width="2.95" height="3" fill="#0c0c0c"/><rect x="10.05" y="1.2" width="2.95" height="3" fill="#0c0c0c"/><rect x="1.2" y="4.2" width="2.95" height="3" fill="#0c0c0c"/><rect x="7.1" y="4.2" width="2.95" height="3" fill="#0c0c0c"/><rect x="4.15" y="7.2" width="2.95" height="3" fill="#0c0c0c"/><rect x="10.05" y="7.2" width="2.95" height="3" fill="#0c0c0c"/><rect x="1.2" y="10.2" width="2.95" height="3" fill="#0c0c0c"/><rect x="7.1" y="10.2" width="2.95" height="3" fill="#0c0c0c"/></svg><svg style="left:1505px;top:211px" width="16" height="16" viewBox="0 0 16 16"><defs><radialGradient id="phg" cx=".38" cy=".34" r=".7"><stop offset="0" stop-color="#f8b060"/><stop offset="1" stop-color="#b86410"/></radialGradient></defs><circle cx="4.4" cy="4.2" r="3.4" fill="url(#phg)"/><circle cx="11.4" cy="11.2" r="3.9" fill="url(#phg)"/></svg><svg style="left:1526.5px;top:213px" width="14.4" height="13.4" viewBox="0 0 14.4 13.4"><path d="M0.6,9L3.4,4.6L13.8,7L11.6,12.6Z" fill="#e8963a" stroke="#8a4a10" stroke-width="0.6"/><path d="M3,6.6L12.6,9.2M6.4,5.2L4.6,10.4M10,6.2L8.4,11.6" stroke="#5a2c06" stroke-width="0.8"/><path d="M5.4,0.6V7" stroke="#3a2a18" stroke-width="0.7"/><path d="M2.4,6.4l1.4,-2.6l1,3zM6,7.4l1.4,-2.8l1,3.2zM9.6,8.2l1.4,-2.6l1,3z" fill="#f4b264"/></svg><div class="b" style="left:1273px;top:230px;width:624px;height:20px;background:#474747"></div><span class="t" style="left:1340px;top:234.02px;color:#d2d2d2;letter-spacing:-0.043px;">Ground_Contacts</span><svg style="left:1321px;top:233.6px" width="16" height="14" viewBox="0 0 16 14"><path d="M8,3.6L12.8,11.4H3.2Z" fill="#86c8fb"/><circle cx="8" cy="2" r="1.25" fill="#f6f6f6"/><circle cx="2.4" cy="12" r="1.25" fill="#f6f6f6"/><circle cx="13.6" cy="12" r="1.25" fill="#f6f6f6"/></svg><div class="b" style="left:1446.7px;top:233.7px;width:12.6px;height:12.6px;background:#2ca4fc;border-radius:2px"></div><div class="b" style="left:1464.2px;top:234.1px;width:4.6px;height:4.6px;background:#808080;border-radius:50%"></div><div class="b" style="left:1464.2px;top:242.1px;width:4.6px;height:4.6px;background:#808080;border-radius:50%"></div><svg style="left:1486.2px;top:231.9px" width="14.2" height="14.4" viewBox="0 0 14.2 14.4"><rect x="0.6" y="0.6" width="13" height="13.2" fill="#fff" stroke="#d4862e" stroke-width="1.2"/><rect x="4.15" y="1.2" width="2.95" height="3" fill="#0c0c0c"/><rect x="10.05" y="1.2" width="2.95" height="3" fill="#0c0c0c"/><rect x="1.2" y="4.2" width="2.95" height="3" fill="#0c0c0c"/><rect x="7.1" y="4.2" width="2.95" height="3" fill="#0c0c0c"/><rect x="4.15" y="7.2" width="2.95" height="3" fill="#0c0c0c"/><rect x="10.05" y="7.2" width="2.95" height="3" fill="#0c0c0c"/><rect x="1.2" y="10.2" width="2.95" height="3" fill="#0c0c0c"/><rect x="7.1" y="10.2" width="2.95" height="3" fill="#0c0c0c"/></svg><svg style="left:1505px;top:231px" width="16" height="16" viewBox="0 0 16 16"><defs><radialGradient id="phg" cx=".38" cy=".34" r=".7"><stop offset="0" stop-color="#f8b060"/><stop offset="1" stop-color="#b86410"/></radialGradient></defs><circle cx="4.4" cy="4.2" r="3.4" fill="url(#phg)"/><circle cx="11.4" cy="11.2" r="3.9" fill="url(#phg)"/></svg><svg style="left:1526.5px;top:233px" width="14.4" height="13.4" viewBox="0 0 14.4 13.4"><path d="M0.6,9L3.4,4.6L13.8,7L11.6,12.6Z" fill="#e8963a" stroke="#8a4a10" stroke-width="0.6"/><path d="M3,6.6L12.6,9.2M6.4,5.2L4.6,10.4M10,6.2L8.4,11.6" stroke="#5a2c06" stroke-width="0.8"/><path d="M5.4,0.6V7" stroke="#3a2a18" stroke-width="0.7"/><path d="M2.4,6.4l1.4,-2.6l1,3zM6,7.4l1.4,-2.8l1,3.2zM9.6,8.2l1.4,-2.6l1,3z" fill="#f4b264"/></svg><div class="b" style="left:1273px;top:250px;width:624px;height:20px;background:#505050"></div><span class="t" style="left:1340px;top:254.02px;color:#d2d2d2;letter-spacing:-0.415px;">Cable_Jacket</span><svg style="left:1321px;top:253.6px" width="16" height="14" viewBox="0 0 16 14"><path d="M8,3.6L12.8,11.4H3.2Z" fill="#86c8fb"/><circle cx="8" cy="2" r="1.25" fill="#f6f6f6"/><circle cx="2.4" cy="12" r="1.25" fill="#f6f6f6"/><circle cx="13.6" cy="12" r="1.25" fill="#f6f6f6"/></svg><div class="b" style="left:1446.7px;top:253.7px;width:12.6px;height:12.6px;background:#2ca4fc;border-radius:2px"></div><div class="b" style="left:1464.2px;top:254.1px;width:4.6px;height:4.6px;background:#808080;border-radius:50%"></div><div class="b" style="left:1464.2px;top:262.1px;width:4.6px;height:4.6px;background:#808080;border-radius:50%"></div><svg style="left:1486.2px;top:251.9px" width="14.2" height="14.4" viewBox="0 0 14.2 14.4"><rect x="0.6" y="0.6" width="13" height="13.2" fill="#fff" stroke="#d4862e" stroke-width="1.2"/><rect x="4.15" y="1.2" width="2.95" height="3" fill="#0c0c0c"/><rect x="10.05" y="1.2" width="2.95" height="3" fill="#0c0c0c"/><rect x="1.2" y="4.2" width="2.95" height="3" fill="#0c0c0c"/><rect x="7.1" y="4.2" width="2.95" height="3" fill="#0c0c0c"/><rect x="4.15" y="7.2" width="2.95" height="3" fill="#0c0c0c"/><rect x="10.05" y="7.2" width="2.95" height="3" fill="#0c0c0c"/><rect x="1.2" y="10.2" width="2.95" height="3" fill="#0c0c0c"/><rect x="7.1" y="10.2" width="2.95" height="3" fill="#0c0c0c"/></svg><svg style="left:1505px;top:251px" width="16" height="16" viewBox="0 0 16 16"><defs><radialGradient id="phg" cx=".38" cy=".34" r=".7"><stop offset="0" stop-color="#f8b060"/><stop offset="1" stop-color="#b86410"/></radialGradient></defs><circle cx="4.4" cy="4.2" r="3.4" fill="url(#phg)"/><circle cx="11.4" cy="11.2" r="3.9" fill="url(#phg)"/></svg><svg style="left:1526.5px;top:253px" width="14.4" height="13.4" viewBox="0 0 14.4 13.4"><path d="M0.6,9L3.4,4.6L13.8,7L11.6,12.6Z" fill="#e8963a" stroke="#8a4a10" stroke-width="0.6"/><path d="M3,6.6L12.6,9.2M6.4,5.2L4.6,10.4M10,6.2L8.4,11.6" stroke="#5a2c06" stroke-width="0.8"/><path d="M5.4,0.6V7" stroke="#3a2a18" stroke-width="0.7"/><path d="M2.4,6.4l1.4,-2.6l1,3zM6,7.4l1.4,-2.8l1,3.2zM9.6,8.2l1.4,-2.6l1,3z" fill="#f4b264"/></svg><div class="b" style="left:1273px;top:270px;width:624px;height:20px;background:#474747"></div><span class="t" style="left:1340px;top:274.02px;color:#d2d2d2;letter-spacing:-0.058px;">Wire_Insulation_01</span><svg style="left:1321px;top:273.6px" width="16" height="14" viewBox="0 0 16 14"><path d="M8,3.6L12.8,11.4H3.2Z" fill="#86c8fb"/><circle cx="8" cy="2" r="1.25" fill="#f6f6f6"/><circle cx="2.4" cy="12" r="1.25" fill="#f6f6f6"/><circle cx="13.6" cy="12" r="1.25" fill="#f6f6f6"/></svg><div class="b" style="left:1446.7px;top:273.7px;width:12.6px;height:12.6px;background:#2ca4fc;border-radius:2px"></div><div class="b" style="left:1464.2px;top:274.1px;width:4.6px;height:4.6px;background:#808080;border-radius:50%"></div><div class="b" style="left:1464.2px;top:282.1px;width:4.6px;height:4.6px;background:#808080;border-radius:50%"></div><svg style="left:1486.2px;top:271.9px" width="14.2" height="14.4" viewBox="0 0 14.2 14.4"><rect x="0.6" y="0.6" width="13" height="13.2" fill="#fff" stroke="#d4862e" stroke-width="1.2"/><rect x="4.15" y="1.2" width="2.95" height="3" fill="#0c0c0c"/><rect x="10.05" y="1.2" width="2.95" height="3" fill="#0c0c0c"/><rect x="1.2" y="4.2" width="2.95" height="3" fill="#0c0c0c"/><rect x="7.1" y="4.2" width="2.95" height="3" fill="#0c0c0c"/><rect x="4.15" y="7.2" width="2.95" height="3" fill="#0c0c0c"/><rect x="10.05" y="7.2" width="2.95" height="3" fill="#0c0c0c"/><rect x="1.2" y="10.2" width="2.95" height="3" fill="#0c0c0c"/><rect x="7.1" y="10.2" width="2.95" height="3" fill="#0c0c0c"/></svg><svg style="left:1505px;top:271px" width="16" height="16" viewBox="0 0 16 16"><defs><radialGradient id="phg" cx=".38" cy=".34" r=".7"><stop offset="0" stop-color="#f8b060"/><stop offset="1" stop-color="#b86410"/></radialGradient></defs><circle cx="4.4" cy="4.2" r="3.4" fill="url(#phg)"/><circle cx="11.4" cy="11.2" r="3.9" fill="url(#phg)"/></svg><svg style="left:1526.5px;top:273px" width="14.4" height="13.4" viewBox="0 0 14.4 13.4"><path d="M0.6,9L3.4,4.6L13.8,7L11.6,12.6Z" fill="#e8963a" stroke="#8a4a10" stroke-width="0.6"/><path d="M3,6.6L12.6,9.2M6.4,5.2L4.6,10.4M10,6.2L8.4,11.6" stroke="#5a2c06" stroke-width="0.8"/><path d="M5.4,0.6V7" stroke="#3a2a18" stroke-width="0.7"/><path d="M2.4,6.4l1.4,-2.6l1,3zM6,7.4l1.4,-2.8l1,3.2zM9.6,8.2l1.4,-2.6l1,3z" fill="#f4b264"/></svg><div class="b" style="left:1273px;top:290px;width:624px;height:20px;background:#505050"></div><span class="t" style="left:1340px;top:294.02px;color:#d2d2d2;letter-spacing:-0.058px;">Wire_Insulation_02</span><svg style="left:1321px;top:293.6px" width="16" height="14" viewBox="0 0 16 14"><path d="M8,3.6L12.8,11.4H3.2Z" fill="#86c8fb"/><circle cx="8" cy="2" r="1.25" fill="#f6f6f6"/><circle cx="2.4" cy="12" r="1.25" fill="#f6f6f6"/><circle cx="13.6" cy="12" r="1.25" fill="#f6f6f6"/></svg><div class="b" style="left:1446.7px;top:293.7px;width:12.6px;height:12.6px;background:#2ca4fc;border-radius:2px"></div><div class="b" style="left:1464.2px;top:294.1px;width:4.6px;height:4.6px;background:#808080;border-radius:50%"></div><div class="b" style="left:1464.2px;top:302.1px;width:4.6px;height:4.6px;background:#808080;border-radius:50%"></div><svg style="left:1486.2px;top:291.9px" width="14.2" height="14.4" viewBox="0 0 14.2 14.4"><rect x="0.6" y="0.6" width="13" height="13.2" fill="#fff" stroke="#d4862e" stroke-width="1.2"/><rect x="4.15" y="1.2" width="2.95" height="3" fill="#0c0c0c"/><rect x="10.05" y="1.2" width="2.95" height="3" fill="#0c0c0c"/><rect x="1.2" y="4.2" width="2.95" height="3" fill="#0c0c0c"/><rect x="7.1" y="4.2" width="2.95" height="3" fill="#0c0c0c"/><rect x="4.15" y="7.2" width="2.95" height="3" fill="#0c0c0c"/><rect x="10.05" y="7.2" width="2.95" height="3" fill="#0c0c0c"/><rect x="1.2" y="10.2" width="2.95" height="3" fill="#0c0c0c"/><rect x="7.1" y="10.2" width="2.95" height="3" fill="#0c0c0c"/></svg><svg style="left:1505px;top:291px" width="16" height="16" viewBox="0 0 16 16"><defs><radialGradient id="phg" cx=".38" cy=".34" r=".7"><stop offset="0" stop-color="#f8b060"/><stop offset="1" stop-color="#b86410"/></radialGradient></defs><circle cx="4.4" cy="4.2" r="3.4" fill="url(#phg)"/><circle cx="11.4" cy="11.2" r="3.9" fill="url(#phg)"/></svg><svg style="left:1526.5px;top:293px" width="14.4" height="13.4" viewBox="0 0 14.4 13.4"><path d="M0.6,9L3.4,4.6L13.8,7L11.6,12.6Z" fill="#e8963a" stroke="#8a4a10" stroke-width="0.6"/><path d="M3,6.6L12.6,9.2M6.4,5.2L4.6,10.4M10,6.2L8.4,11.6" stroke="#5a2c06" stroke-width="0.8"/><path d="M5.4,0.6V7" stroke="#3a2a18" stroke-width="0.7"/><path d="M2.4,6.4l1.4,-2.6l1,3zM6,7.4l1.4,-2.8l1,3.2zM9.6,8.2l1.4,-2.6l1,3z" fill="#f4b264"/></svg><div class="b" style="left:1273px;top:310px;width:624px;height:20px;background:#474747"></div><span class="t" style="left:1340px;top:314.02px;color:#d2d2d2;letter-spacing:-0.058px;">Wire_Insulation_03</span><svg style="left:1321px;top:313.6px" width="16" height="14" viewBox="0 0 16 14"><path d="M8,3.6L12.8,11.4H3.2Z" fill="#86c8fb"/><circle cx="8" cy="2" r="1.25" fill="#f6f6f6"/><circle cx="2.4" cy="12" r="1.25" fill="#f6f6f6"/><circle cx="13.6" cy="12" r="1.25" fill="#f6f6f6"/></svg><div class="b" style="left:1446.7px;top:313.7px;width:12.6px;height:12.6px;background:#2ca4fc;border-radius:2px"></div><div class="b" style="left:1464.2px;top:314.1px;width:4.6px;height:4.6px;background:#808080;border-radius:50%"></div><div class="b" style="left:1464.2px;top:322.1px;width:4.6px;height:4.6px;background:#808080;border-radius:50%"></div><svg style="left:1486.2px;top:311.9px" width="14.2" height="14.4" viewBox="0 0 14.2 14.4"><rect x="0.6" y="0.6" width="13" height="13.2" fill="#fff" stroke="#d4862e" stroke-width="1.2"/><rect x="4.15" y="1.2" width="2.95" height="3" fill="#0c0c0c"/><rect x="10.05" y="1.2" width="2.95" height="3" fill="#0c0c0c"/><rect x="1.2" y="4.2" width="2.95" height="3" fill="#0c0c0c"/><rect x="7.1" y="4.2" width="2.95" height="3" fill="#0c0c0c"/><rect x="4.15" y="7.2" width="2.95" height="3" fill="#0c0c0c"/><rect x="10.05" y="7.2" width="2.95" height="3" fill="#0c0c0c"/><rect x="1.2" y="10.2" width="2.95" height="3" fill="#0c0c0c"/><rect x="7.1" y="10.2" width="2.95" height="3" fill="#0c0c0c"/></svg><svg style="left:1505px;top:311px" width="16" height="16" viewBox="0 0 16 16"><defs><radialGradient id="phg" cx=".38" cy=".34" r=".7"><stop offset="0" stop-color="#f8b060"/><stop offset="1" stop-color="#b86410"/></radialGradient></defs><circle cx="4.4" cy="4.2" r="3.4" fill="url(#phg)"/><circle cx="11.4" cy="11.2" r="3.9" fill="url(#phg)"/></svg><svg style="left:1526.5px;top:313px" width="14.4" height="13.4" viewBox="0 0 14.4 13.4"><path d="M0.6,9L3.4,4.6L13.8,7L11.6,12.6Z" fill="#e8963a" stroke="#8a4a10" stroke-width="0.6"/><path d="M3,6.6L12.6,9.2M6.4,5.2L4.6,10.4M10,6.2L8.4,11.6" stroke="#5a2c06" stroke-width="0.8"/><path d="M5.4,0.6V7" stroke="#3a2a18" stroke-width="0.7"/><path d="M2.4,6.4l1.4,-2.6l1,3zM6,7.4l1.4,-2.8l1,3.2zM9.6,8.2l1.4,-2.6l1,3z" fill="#f4b264"/></svg><div class="b" style="left:1279px;top:50px;width:1px;height:87px;background:#b4b2ae"></div><div class="b" style="left:1284px;top:60px;width:4px;height:1px;background:#b4b2ae"></div><div class="b" style="left:1284px;top:140px;width:4px;height:1px;background:#b4b2ae"></div><div class="b" style="left:1275px;top:56px;width:9px;height:9px;border:1px solid #b4b2ae;background:#4c4c4c"></div><div class="b" style="left:1277px;top:60px;width:5px;height:1px;background:#d8d8d8"></div><div class="b" style="left:1275px;top:136px;width:9px;height:9px;border:1px solid #b4b2ae;background:#4c4c4c"></div><div class="b" style="left:1277px;top:140px;width:5px;height:1px;background:#d8d8d8"></div><div class="b" style="left:1290px;top:70px;width:1px;height:51px;background:#b4b2ae"></div><div class="b" style="left:1290px;top:80px;width:8px;height:1px;background:#b4b2ae"></div><div class="b" style="left:1290px;top:100px;width:8px;height:1px;background:#b4b2ae"></div><div class="b" style="left:1290px;top:120px;width:8px;height:1px;background:#b4b2ae"></div><div class="b" style="left:1290px;top:150px;width:1px;height:7px;background:#b4b2ae"></div><div class="b" style="left:1286px;top:156px;width:9px;height:9px;border:1px solid #b4b2ae;background:#4c4c4c"></div><div class="b" style="left:1288px;top:160px;width:5px;height:1px;background:#d8d8d8"></div><div class="b" style="left:1295px;top:160px;width:4px;height:1px;background:#b4b2ae"></div><div class="b" style="left:1301px;top:170px;width:1px;height:7px;background:#b4b2ae"></div><div class="b" style="left:1297px;top:176px;width:9px;height:9px;border:1px solid #b4b2ae;background:#4c4c4c"></div><div class="b" style="left:1299px;top:180px;width:5px;height:1px;background:#d8d8d8"></div><div class="b" style="left:1306px;top:180px;width:4px;height:1px;background:#b4b2ae"></div><div class="b" style="left:1312px;top:190px;width:1px;height:131px;background:#b4b2ae"></div><div class="b" style="left:1312px;top:200px;width:8px;height:1px;background:#b4b2ae"></div><div class="b" style="left:1312px;top:220px;width:8px;height:1px;background:#b4b2ae"></div><div class="b" style="left:1312px;top:240px;width:8px;height:1px;background:#b4b2ae"></div><div class="b" style="left:1312px;top:260px;width:8px;height:1px;background:#b4b2ae"></div><div class="b" style="left:1312px;top:280px;width:8px;height:1px;background:#b4b2ae"></div><div class="b" style="left:1312px;top:300px;width:8px;height:1px;background:#b4b2ae"></div><div class="b" style="left:1312px;top:320px;width:8px;height:1px;background:#b4b2ae"></div><div class="b" style="left:1443px;top:50px;width:1px;height:765px;background:#363636"></div><div class="b" style="left:1482px;top:50px;width:1px;height:765px;background:#363636"></div><div class="b" style="left:1270px;top:820px;width:629px;height:200px;border:1px solid #626262;border-bottom:none;background:#484848"></div><svg style="left:1276px;top:825px" width="12" height="12"><rect width="12" height="12" fill="url(#gp)"/></svg><span class="t" style="left:1296.9px;top:825.02px;letter-spacing:-0.668px;">Файл</span><span class="t" style="left:1337.25px;top:825.02px;letter-spacing:-0.083px;">Правка</span><span class="t" style="left:1390.4px;top:825.02px;letter-spacing:-0.402px;">Вид</span><div class="b" style="left:1271px;top:843px;width:627px;height:1px;background:#626262"></div><div class="b" style="left:1271px;top:844px;width:627px;height:171px;border:1px solid #303030;border-right-color:#5c5c5c;border-bottom-color:#5c5c5c;background:#474747"></div><div class="b" style="left:1273px;top:845px;width:624px;height:16px;background:#484848;border-bottom:1px solid #333"></div><div class="b" style="left:1428px;top:845px;width:1px;height:15px;background:#686868"></div><div class="b" style="left:1427px;top:845px;width:1px;height:15px;background:#2e2e2e"></div><div class="b" style="left:1447px;top:845px;width:1px;height:15px;background:#686868"></div><div class="b" style="left:1446px;top:845px;width:1px;height:15px;background:#2e2e2e"></div><div class="b" style="left:1465px;top:845px;width:1px;height:15px;background:#686868"></div><div class="b" style="left:1464px;top:845px;width:1px;height:15px;background:#2e2e2e"></div><div class="b" style="left:1483px;top:845px;width:1px;height:15px;background:#686868"></div><div class="b" style="left:1482px;top:845px;width:1px;height:15px;background:#2e2e2e"></div><div class="b" style="left:1501px;top:845px;width:1px;height:15px;background:#686868"></div><div class="b" style="left:1500px;top:845px;width:1px;height:15px;background:#2e2e2e"></div><div class="b" style="left:1518px;top:845px;width:1px;height:15px;background:#686868"></div><div class="b" style="left:1517px;top:845px;width:1px;height:15px;background:#2e2e2e"></div><div class="b" style="left:1537px;top:845px;width:1px;height:15px;background:#686868"></div><div class="b" style="left:1536px;top:845px;width:1px;height:15px;background:#2e2e2e"></div><div class="b" style="left:1555px;top:845px;width:1px;height:15px;background:#686868"></div><div class="b" style="left:1554px;top:845px;width:1px;height:15px;background:#2e2e2e"></div><div class="b" style="left:1573px;top:845px;width:1px;height:15px;background:#686868"></div><div class="b" style="left:1572px;top:845px;width:1px;height:15px;background:#2e2e2e"></div><div class="b" style="left:1591px;top:845px;width:1px;height:15px;background:#686868"></div><div class="b" style="left:1590px;top:845px;width:1px;height:15px;background:#2e2e2e"></div><div class="b" style="left:1609px;top:845px;width:1px;height:15px;background:#686868"></div><div class="b" style="left:1608px;top:845px;width:1px;height:15px;background:#2e2e2e"></div><span class="t" style="left:1276px;top:846.02px;color:#cfcfcf;letter-spacing:-0.111px;">Название</span><span class="t" style="left:1434px;top:846.02px;color:#cfcfcf;">S</span><span class="t" style="left:1452px;top:846.02px;color:#cfcfcf;">V</span><span class="t" style="left:1470.5px;top:846.02px;color:#cfcfcf;">R</span><span class="t" style="left:1488.5px;top:846.02px;color:#cfcfcf;">M</span><span class="t" style="left:1505.5px;top:846.02px;color:#cfcfcf;">L</span><span class="t" style="left:1524px;top:846.02px;color:#cfcfcf;">A</span><span class="t" style="left:1542.5px;top:846.02px;color:#cfcfcf;">G</span><span class="t" style="left:1560.5px;top:846.02px;color:#cfcfcf;">D</span><span class="t" style="left:1578px;top:846.02px;color:#cfcfcf;">E</span><span class="t" style="left:1596px;top:846.02px;color:#cfcfcf;">X</span><div class="b" style="left:1273px;top:861px;width:624px;height:15px;background:#545454"></div><div class="b" style="left:1295.5px;top:864px;width:10.5px;height:10px;background:#2ca4fc;border-radius:1px"></div><span class="t" style="left:1312.3px;top:862.02px;color:#d2d2d2;letter-spacing:-0.674px;">Power_Plug_CEE_7_7</span><svg style="left:1434px;top:863.5px" width="10" height="10" viewBox="0 0 10 10"><circle cx="5" cy="5" r="4.6" fill="#8a8a8a"/></svg><svg style="left:1451.5px;top:863.6px" width="12.5" height="9.6" viewBox="0 0 12.5 9.6"><rect width="12.5" height="9.6" rx="1" fill="#f2f2f2"/><path d="M1.6,4.8C4,1.8 8.6,1.8 11,4.8C8.6,7.8 4,7.8 1.6,4.8z" fill="#fff" stroke="#111" stroke-width="0.8"/><circle cx="6.4" cy="4.6" r="2" fill="#111"/></svg><svg style="left:1469.5px;top:862.6px" width="12" height="12" viewBox="0 0 12 12"><rect x="0.6" y="4.4" width="11" height="7" fill="#1a1a1a"/><path d="M0.4,2.6L11,0.4L11.4,2.2L0.8,4.2z" fill="#1a1a1a"/><rect x="1.6" y="2.2" width="1.2" height="1.4" fill="#555" transform="rotate(-12 1.6 2.8)"/><rect x="4.2" y="2.2" width="1.2" height="1.4" fill="#555" transform="rotate(-12 4.2 2.8)"/><rect x="6.8" y="2.2" width="1.2" height="1.4" fill="#555" transform="rotate(-12 6.8 2.8)"/><rect x="9.4" y="2.2" width="1.2" height="1.4" fill="#555" transform="rotate(-12 9.4 2.8)"/></svg><svg style="left:1487px;top:862.2px" width="13" height="13" viewBox="0 0 13 13"><path d="M1.4,0.6V10.6H6M1.4,5.4H6" fill="none" stroke="#161616" stroke-width="1.1"/><rect x="7" y="4.4" width="4.6" height="1.8" fill="#f0f0f0"/><rect x="8.4" y="9.8" width="4.2" height="1.8" fill="#f0f0f0"/></svg><svg style="left:1505px;top:862px" width="11" height="13" viewBox="0 0 11 13"><path d="M2.8,6V4A2.7,2.7 0 0 1 8.2,4V6" fill="none" stroke="#1a1a1a" stroke-width="1.3"/><rect x="1" y="6" width="9" height="6.4" rx="0.8" fill="#4a4a4a" stroke="#1a1a1a" stroke-width="1"/></svg><svg style="left:1526.5px;top:862.4px" width="6" height="12.4" viewBox="0 0 6 12.4"><rect width="5.4" height="3.4" fill="#f0f0f0" stroke="#222" stroke-width="0.6"/><rect y="4.4" width="5.4" height="3.4" fill="#f0f0f0" stroke="#222" stroke-width="0.6"/><rect y="8.8" width="5.4" height="3.4" fill="#f0f0f0" stroke="#222" stroke-width="0.6"/></svg><svg style="left:1541px;top:862.4px" width="13" height="12.4" viewBox="0 0 13 12.4"><path d="M6.4,0.6L12.2,8.6L6.4,11.8L0.6,8.6ZM6.4,0.6V11.8M0.6,8.6L6.4,6.6L12.2,8.6" fill="#3e3e3e" stroke="#ececec" stroke-width="0.9" stroke-linejoin="round"/></svg><svg style="left:1559.5px;top:862.6px" width="12" height="12" viewBox="0 0 12 12"><path d="M1,3L6,0.8L11,3V7.6L6,11.2L1,7.6Z" fill="#b8b8b8" stroke="#e6e6e6" stroke-width="0.8"/><path d="M1,3L6,5.2L11,3M6,5.2V11" fill="none" stroke="#6a6a6a" stroke-width="0.8"/></svg><svg style="left:1576.5px;top:864.6px" width="12" height="8" viewBox="0 0 12 8"><path d="M0.6,1C1,5.6 4,7.2 6,7.2C8,7.2 11,5.6 11.4,1Z" fill="#d8d8d8" stroke="#222" stroke-width="0.7"/><ellipse cx="6" cy="1.2" rx="5.4" ry="1" fill="#f4f4f4"/></svg><svg style="left:1594px;top:863px" width="11" height="11" viewBox="0 0 11 11"><path d="M1,0.6H4L5.4,3L6.8,0.6H10V3.4L8,5.4L10,7.4V10.4H6.8L5.4,8L4,10.4H1V7.4L3,5.4L1,3.4Z" fill="#f6f6f6" stroke="#1a1a1a" stroke-width="0.8"/></svg><div class="b" style="left:1295.5px;top:879px;width:10.5px;height:10px;background:#ffdc14;border-radius:1px"></div><span class="t" style="left:1312.3px;top:877.02px;color:#d2d2d2;letter-spacing:-0.622px;">Scene</span><svg style="left:1434px;top:878.5px" width="10" height="10" viewBox="0 0 10 10"><circle cx="5" cy="5" r="4.6" fill="#8a8a8a"/></svg><svg style="left:1451.5px;top:878.6px" width="12.5" height="9.6" viewBox="0 0 12.5 9.6"><rect width="12.5" height="9.6" rx="1" fill="#f2f2f2"/><path d="M1.6,4.8C4,1.8 8.6,1.8 11,4.8C8.6,7.8 4,7.8 1.6,4.8z" fill="#fff" stroke="#111" stroke-width="0.8"/><circle cx="6.4" cy="4.6" r="2" fill="#111"/></svg><svg style="left:1469.5px;top:877.6px" width="12" height="12" viewBox="0 0 12 12"><rect x="0.6" y="4.4" width="11" height="7" fill="#1a1a1a"/><path d="M0.4,2.6L11,0.4L11.4,2.2L0.8,4.2z" fill="#1a1a1a"/><rect x="1.6" y="2.2" width="1.2" height="1.4" fill="#555" transform="rotate(-12 1.6 2.8)"/><rect x="4.2" y="2.2" width="1.2" height="1.4" fill="#555" transform="rotate(-12 4.2 2.8)"/><rect x="6.8" y="2.2" width="1.2" height="1.4" fill="#555" transform="rotate(-12 6.8 2.8)"/><rect x="9.4" y="2.2" width="1.2" height="1.4" fill="#555" transform="rotate(-12 9.4 2.8)"/></svg><svg style="left:1487px;top:877.2px" width="13" height="13" viewBox="0 0 13 13"><path d="M1.4,0.6V10.6H6M1.4,5.4H6" fill="none" stroke="#161616" stroke-width="1.1"/><rect x="7" y="4.4" width="4.6" height="1.8" fill="#f0f0f0"/><rect x="8.4" y="9.8" width="4.2" height="1.8" fill="#f0f0f0"/></svg><svg style="left:1505px;top:877px" width="11" height="13" viewBox="0 0 11 13"><path d="M2.8,6V4A2.7,2.7 0 0 1 8.2,4V6" fill="none" stroke="#1a1a1a" stroke-width="1.3"/><rect x="1" y="6" width="9" height="6.4" rx="0.8" fill="#4a4a4a" stroke="#1a1a1a" stroke-width="1"/></svg><svg style="left:1526.5px;top:877.4px" width="6" height="12.4" viewBox="0 0 6 12.4"><rect width="5.4" height="3.4" fill="#f0f0f0" stroke="#222" stroke-width="0.6"/><rect y="4.4" width="5.4" height="3.4" fill="#f0f0f0" stroke="#222" stroke-width="0.6"/><rect y="8.8" width="5.4" height="3.4" fill="#f0f0f0" stroke="#222" stroke-width="0.6"/></svg><svg style="left:1541px;top:877.4px" width="13" height="12.4" viewBox="0 0 13 12.4"><path d="M6.4,0.6L12.2,8.6L6.4,11.8L0.6,8.6ZM6.4,0.6V11.8M0.6,8.6L6.4,6.6L12.2,8.6" fill="#3e3e3e" stroke="#ececec" stroke-width="0.9" stroke-linejoin="round"/></svg><svg style="left:1559.5px;top:877.6px" width="12" height="12" viewBox="0 0 12 12"><path d="M1,3L6,0.8L11,3V7.6L6,11.2L1,7.6Z" fill="#b8b8b8" stroke="#e6e6e6" stroke-width="0.8"/><path d="M1,3L6,5.2L11,3M6,5.2V11" fill="none" stroke="#6a6a6a" stroke-width="0.8"/></svg><svg style="left:1576.5px;top:879.6px" width="12" height="8" viewBox="0 0 12 8"><path d="M0.6,1C1,5.6 4,7.2 6,7.2C8,7.2 11,5.6 11.4,1Z" fill="#d8d8d8" stroke="#222" stroke-width="0.7"/><ellipse cx="6" cy="1.2" rx="5.4" ry="1" fill="#f4f4f4"/></svg><svg style="left:1594px;top:878px" width="11" height="11" viewBox="0 0 11 11"><path d="M1,0.6H4L5.4,3L6.8,0.6H10V3.4L8,5.4L10,7.4V10.4H6.8L5.4,8L4,10.4H1V7.4L3,5.4L1,3.4Z" fill="#f6f6f6" stroke="#1a1a1a" stroke-width="0.8"/></svg><div class="b" style="left:1283px;top:861px;width:1px;height:23px;background:#7a7a7a"></div><div class="b" style="left:1283px;top:868px;width:10px;height:1px;background:#7a7a7a"></div><div class="b" style="left:1283px;top:883px;width:10px;height:1px;background:#7a7a7a"></div><div class="b" style="left:1901px;top:26px;width:19px;height:58px;background:linear-gradient(90deg,#6c6c6c,#7e7e7e 60%,#747474);border-radius:3px 0 0 3px;box-shadow:0 0 0 1px #333;"></div><span class="t" style="left:1917.5px;top:31px;width:48px;text-align:center;color:#f6a93b;letter-spacing:-0.204px;transform-origin:0 0;transform:rotate(90deg);">Объекты</span><div class="b" style="left:1901px;top:86px;width:19px;height:44px;background:linear-gradient(90deg,#3b3b3b,#3f3f3f);border-radius:3px 0 0 3px;box-shadow:0 0 0 1px #333;"></div><span class="t" style="left:1917.5px;top:91.5px;width:33px;text-align:center;color:#8a8a8a;letter-spacing:-0.425px;transform-origin:0 0;transform:rotate(90deg);">Дубли</span><div class="b" style="left:1901px;top:132px;width:19px;height:112px;background:linear-gradient(90deg,#3b3b3b,#3f3f3f);border-radius:3px 0 0 3px;box-shadow:0 0 0 1px #333;"></div><span class="t" style="left:1917.5px;top:140px;width:96px;text-align:center;color:#8a8a8a;letter-spacing:-0.471px;transform-origin:0 0;transform:rotate(90deg);">Браузер библиотек</span><div class="b" style="left:1901px;top:246px;width:19px;height:64px;background:linear-gradient(90deg,#3b3b3b,#3f3f3f);border-radius:3px 0 0 3px;box-shadow:0 0 0 1px #333;"></div><span class="t" style="left:1917.5px;top:253px;width:50px;text-align:center;color:#8a8a8a;letter-spacing:-0.729px;transform-origin:0 0;transform:rotate(90deg);">Структура</span><div class="b" style="left:1901px;top:821px;width:19px;height:61px;background:linear-gradient(90deg,#3b3b3b,#3f3f3f);border-radius:3px 0 0 3px;box-shadow:0 0 0 1px #333;"></div><span class="t" style="left:1917.5px;top:828px;width:47px;text-align:center;color:#8a8a8a;letter-spacing:-0.765px;transform-origin:0 0;transform:rotate(90deg);">Атрибуты</span><div class="b" style="left:1901px;top:884px;width:19px;height:37px;background:linear-gradient(90deg,#6c6c6c,#7e7e7e 60%,#747474);border-radius:3px 0 0 3px;box-shadow:0 0 0 1px #333;"></div><span class="t" style="left:1917.5px;top:890px;width:25px;text-align:center;color:#f6a93b;letter-spacing:-1.241px;transform-origin:0 0;transform:rotate(90deg);">Слои</span><svg style="left:40px;top:825px" width="6" height="15"><rect width="6" height="15" fill="url(#gp)"/></svg><svg style="left:40px;top:851px" width="6" height="21"><rect width="6" height="21" fill="url(#gp)"/></svg><div class="b" style="left:49px;top:821px;width:1145px;height:23px;background:#383838;border-radius:3px;box-shadow:inset 0 1px 0 #303030"></div><div class="b" style="left:54px;top:838px;width:1px;height:5px;background:#e0e0e0"></div><div class="b" style="left:87px;top:838px;width:1px;height:5px;background:#e0e0e0"></div><div class="b" style="left:119px;top:838px;width:1px;height:5px;background:#e0e0e0"></div><div class="b" style="left:152px;top:838px;width:1px;height:5px;background:#e0e0e0"></div><div class="b" style="left:184px;top:838px;width:1px;height:5px;background:#e0e0e0"></div><div class="b" style="left:216px;top:838px;width:1px;height:5px;background:#e0e0e0"></div><div class="b" style="left:249px;top:838px;width:1px;height:5px;background:#e0e0e0"></div><div class="b" style="left:281px;top:838px;width:1px;height:5px;background:#e0e0e0"></div><div class="b" style="left:313px;top:838px;width:1px;height:5px;background:#e0e0e0"></div><div class="b" style="left:346px;top:838px;width:1px;height:5px;background:#e0e0e0"></div><div class="b" style="left:378px;top:838px;width:1px;height:5px;background:#e0e0e0"></div><div class="b" style="left:410px;top:838px;width:1px;height:5px;background:#e0e0e0"></div><div class="b" style="left:443px;top:838px;width:1px;height:5px;background:#e0e0e0"></div><div class="b" style="left:475px;top:838px;width:1px;height:5px;background:#e0e0e0"></div><div class="b" style="left:508px;top:838px;width:1px;height:5px;background:#e0e0e0"></div><div class="b" style="left:540px;top:838px;width:1px;height:5px;background:#e0e0e0"></div><div class="b" style="left:572px;top:838px;width:1px;height:5px;background:#e0e0e0"></div><div class="b" style="left:605px;top:838px;width:1px;height:5px;background:#e0e0e0"></div><div class="b" style="left:637px;top:838px;width:1px;height:5px;background:#e0e0e0"></div><div class="b" style="left:669px;top:838px;width:1px;height:5px;background:#e0e0e0"></div><div class="b" style="left:702px;top:838px;width:1px;height:5px;background:#e0e0e0"></div><div class="b" style="left:734px;top:838px;width:1px;height:5px;background:#e0e0e0"></div><div class="b" style="left:767px;top:838px;width:1px;height:5px;background:#e0e0e0"></div><div class="b" style="left:799px;top:838px;width:1px;height:5px;background:#e0e0e0"></div><div class="b" style="left:831px;top:838px;width:1px;height:5px;background:#e0e0e0"></div><div class="b" style="left:864px;top:838px;width:1px;height:5px;background:#e0e0e0"></div><div class="b" style="left:896px;top:838px;width:1px;height:5px;background:#e0e0e0"></div><div class="b" style="left:928px;top:838px;width:1px;height:5px;background:#e0e0e0"></div><div class="b" style="left:961px;top:838px;width:1px;height:5px;background:#e0e0e0"></div><div class="b" style="left:993px;top:838px;width:1px;height:5px;background:#e0e0e0"></div><div class="b" style="left:1026px;top:838px;width:1px;height:5px;background:#e0e0e0"></div><div class="b" style="left:1058px;top:838px;width:1px;height:5px;background:#e0e0e0"></div><div class="b" style="left:1090px;top:838px;width:1px;height:5px;background:#e0e0e0"></div><div class="b" style="left:1123px;top:838px;width:1px;height:5px;background:#e0e0e0"></div><div class="b" style="left:1155px;top:838px;width:1px;height:5px;background:#e0e0e0"></div><div class="b" style="left:1187px;top:838px;width:1px;height:5px;background:#e0e0e0"></div><div class="b" style="left:863px;top:822px;width:1px;height:21px;background:#9a9a9a"></div><div class="b" style="left:50px;top:821px;width:9px;height:14px;background:#58e28c"></div><span class="t" style="left:60.5px;top:820.02px;color:#58e28c;">0</span><span class="t" style="left:115.142px;top:820.02px;color:#d8d8d8;">2</span><span class="t" style="left:179.882px;top:820.02px;color:#d8d8d8;">4</span><span class="t" style="left:244.622px;top:820.02px;color:#d8d8d8;">6</span><span class="t" style="left:309.362px;top:820.02px;color:#d8d8d8;">8</span><span class="t" style="left:370.904px;top:820.02px;color:#d8d8d8;">10</span><span class="t" style="left:435.644px;top:820.02px;color:#d8d8d8;">12</span><span class="t" style="left:500.384px;top:820.02px;color:#d8d8d8;">14</span><span class="t" style="left:565.124px;top:820.02px;color:#d8d8d8;">16</span><span class="t" style="left:629.864px;top:820.02px;color:#d8d8d8;">18</span><span class="t" style="left:694.604px;top:820.02px;color:#d8d8d8;">20</span><span class="t" style="left:759.344px;top:820.02px;color:#d8d8d8;">22</span><span class="t" style="left:824.084px;top:820.02px;color:#d8d8d8;">24</span><span class="t" style="left:888.824px;top:820.02px;color:#d8d8d8;">26</span><span class="t" style="left:953.564px;top:820.02px;color:#d8d8d8;">28</span><span class="t" style="left:1018.3px;top:820.02px;color:#d8d8d8;">30</span><span class="t" style="left:1083.04px;top:820.02px;color:#d8d8d8;">32</span><span class="t" style="left:1147.78px;top:820.02px;color:#d8d8d8;">34</span><div class="fld" style="left:1200px;top:823px;width:66px;height:16.5px"></div><span class="t" style="left:1205px;top:825.02px;color:#cfcfcf;">0 K</span><svg style="left:1258.5px;top:825.25px" width="6" height="12" viewBox="0 0 6 12"><path d="M3 0.5L5.8 5H0.2z M3 11.5L5.8 7H0.2z" fill="#9a9a9a"/></svg><div class="fld" style="left:48.5px;top:852.5px;width:65.5px;height:16.5px"></div><span class="t" style="left:53px;top:853.52px;color:#cfcfcf;">0 K</span><svg style="left:106.5px;top:854.75px" width="6" height="12" viewBox="0 0 6 12"><path d="M3 0.5L5.8 5H0.2z M3 11.5L5.8 7H0.2z" fill="#9a9a9a"/></svg><div class="b" style="left:121px;top:853px;width:566px;height:15.5px;border-radius:4px;background:linear-gradient(#808080,#5e5e5e);box-shadow:0 0 0 1px #3a3a3a"></div><svg style="left:124px;top:857px" width="8" height="8" viewBox="0 0 8 8"><path d="M0.5 4L7.5 0.8L6 4L7.5 7.2z" fill="#d8d8d8"/></svg><svg style="left:674px;top:857px" width="8" height="8" viewBox="0 0 8 8"><path d="M7.5 4L0.5 0.8L2 4L0.5 7.2z" fill="#d8d8d8"/></svg><span class="t" style="left:137.5px;top:853.52px;color:#3c3c3c;">0 K</span><span class="t" style="left:645.5px;top:853.52px;color:#3c3c3c;">35 K</span><div class="fld" style="left:692px;top:852.5px;width:66.5px;height:16.5px"></div><span class="t" style="left:697px;top:853.52px;color:#cfcfcf;">35 K</span><svg style="left:751px;top:854.75px" width="6" height="12" viewBox="0 0 6 12"><path d="M3 0.5L5.8 5H0.2z M3 11.5L5.8 7H0.2z" fill="#9a9a9a"/></svg><div class="grp" style="left:770px;top:848px;width:27px;height:26px"></div><svg style="left:770px;top:848px" width="27" height="26" viewBox="0 0 27 26"><rect x="5" y="5.6" width="2.7" height="15" fill="#161616"/><polygon points="7.6,13.1 15.6,6 13.2,13.1 15.6,20.2" fill="#161616" /><polygon points="12.6,13.1 21.8,6 18.6,13.1 21.8,20.2" fill="#161616" /></svg><div class="grp" style="left:808px;top:848px;width:139px;height:26px"><div class="sep" style="left:27px;top:0;width:1px;height:26px"></div><div class="sep" style="left:55px;top:0;width:1px;height:26px"></div><div class="sep" style="left:83px;top:0;width:1px;height:26px"></div><div class="sep" style="left:111px;top:0;width:1px;height:26px"></div></div><svg style="left:808px;top:848px" width="27" height="26" viewBox="0 0 27 26"><path d="M19.6,8.2 A7,7 0 1 0 19.6,18" fill="none" stroke="#161616" stroke-width="4.6"/><polygon points="10.8,13.1 21.6,8 21.6,18.2" fill="#161616" /></svg><svg style="left:836px;top:848px" width="27" height="26" viewBox="0 0 27 26"><polygon points="6.2,13.1 17,8 15,13.1 17,18.2" fill="#161616" /><path d="M20.2,6.4 C16.8,10.6 16.8,15.6 20.2,19.8" fill="none" stroke="#161616" stroke-width="2.2"/></svg><svg style="left:864px;top:848px" width="27" height="26" viewBox="0 0 27 26"><polygon points="5.6,5.6 20.6,13.1 5.6,20.6 8.7,13.1" fill="#4cf09a" stroke="#0c2a18" stroke-width="1.2" stroke-linejoin="round" /></svg><svg style="left:892px;top:848px" width="27" height="26" viewBox="0 0 27 26"><polygon points="20.8,13.1 10,8 12,13.1 10,18.2" fill="#161616" /><path d="M6.8,6.4 C10.2,10.6 10.2,15.6 6.8,19.8" fill="none" stroke="#161616" stroke-width="2.2"/></svg><svg style="left:920px;top:848px" width="27" height="26" viewBox="0 0 27 26"><path d="M7.4,8.2 A7,7 0 1 1 7.4,18" fill="none" stroke="#161616" stroke-width="4.6"/><polygon points="16.2,13.1 5.4,8 5.4,18.2" fill="#161616" /></svg><div class="grp" style="left:958px;top:848px;width:27px;height:26px"></div><svg style="left:958px;top:848px" width="27" height="26" viewBox="0 0 27 26"><rect x="19.3" y="5.6" width="2.7" height="15" fill="#161616"/><polygon points="19.4,13.1 11.4,6 13.8,13.1 11.4,20.2" fill="#161616" /><polygon points="14.4,13.1 5.2,6 8.4,13.1 5.2,20.2" fill="#161616" /></svg><div class="grp" style="left:996px;top:848px;width:83px;height:26px"><div class="sep" style="left:27px;top:0;width:1px;height:26px"></div><div class="sep" style="left:55px;top:0;width:1px;height:26px"></div></div><svg style="left:996px;top:848px" width="27" height="26" viewBox="0 0 27 26"><g opacity=".6"><circle cx="13.5" cy="13.5" r="9.6" fill="#7a7a7a" stroke="#858585" stroke-width="1"/><path d="M9.5,17.5L15,12" stroke="#8a8a8a" stroke-width="2.6" stroke-linecap="round"/><circle cx="16.4" cy="10.6" r="3" fill="none" stroke="#8a8a8a" stroke-width="1.6"/></g></svg><svg style="left:1024px;top:848px" width="27" height="26" viewBox="0 0 27 26"><circle cx="13.5" cy="13.5" r="9.6" fill="#ea5058" stroke="#1a0a0a" stroke-width="1.3"/><path d="M11.4,8.6 C8.4,11.4 8.4,15.6 11.4,18.4 M15.6,8.6 C18.6,11.4 18.6,15.6 15.6,18.4" fill="none" stroke="#160808" stroke-width="2.4"/></svg><svg style="left:1052px;top:848px" width="27" height="26" viewBox="0 0 27 26"><circle cx="13.5" cy="13.5" r="9.6" fill="#ea5058" stroke="#1a0a0a" stroke-width="1.3"/><text x="13.5" y="19.2" text-anchor="middle" font-family="Liberation Sans,sans-serif" font-weight="bold" font-size="15.5" fill="#160808" stroke="#160808" stroke-width="0.6">?</text></svg><div class="grp" style="left:1090px;top:848px;width:139px;height:26px"><div class="on" style="left:0px;top:0;width:27px;height:26px"></div><div class="on" style="left:28px;top:0;width:27px;height:26px"></div><div class="on" style="left:56px;top:0;width:27px;height:26px"></div><div class="on" style="left:84px;top:0;width:27px;height:26px"></div><div class="sep" style="left:27px;top:0;width:1px;height:26px"></div><div class="sep" style="left:55px;top:0;width:1px;height:26px"></div><div class="sep" style="left:83px;top:0;width:1px;height:26px"></div><div class="sep" style="left:111px;top:0;width:1px;height:26px"></div></div><svg style="left:1090px;top:848px" width="27" height="26" viewBox="0 0 27 26"><polygon points="13.5,3.9 16.8,7.9 14.7,7.9 14.7,12.3 19.1,12.3 19.1,10.2 23.1,13.5 19.1,16.8 19.1,14.7 14.7,14.7 14.7,19.1 16.8,19.1 13.5,23.1 10.2,19.1 12.3,19.1 12.3,14.7 7.9,14.7 7.9,16.8 3.9,13.5 7.9,10.2 7.9,12.3 12.3,12.3 12.3,7.9 10.2,7.9" fill="#f5962a" stroke="#3a2206" stroke-width="0.9" stroke-linejoin="round" /></svg><svg style="left:1118px;top:848px" width="27" height="26" viewBox="0 0 27 26"><rect x="6.2" y="6.4" width="15" height="15" rx="1.5" fill="#f5962a" stroke="#33240a" stroke-width="1.1"/><path d="M6.2,14H13.6V21.4" fill="none" stroke="#33240a" stroke-width="1.1"/><path d="M13.6,14L20.4,7.2" stroke="#33240a" stroke-width="1.1" stroke-dasharray="2 1"/></svg><svg style="left:1146px;top:848px" width="27" height="26" viewBox="0 0 27 26"><path d="M13.24,6.10 A7.4,7.4 0 0 0 7.09,17.20" fill="none" stroke="#33240a" stroke-width="4"/><path d="M13.24,6.10 A7.4,7.4 0 0 0 7.09,17.20" fill="none" stroke="#f5962a" stroke-width="2.5"/><polygon points="4.60159,18.6375 12.1532,20.6258 9.58124,15.7625" fill="#f5962a" stroke="#33240a" stroke-width="0.8" stroke-linejoin="round" /><path d="M6.91,16.86 L7.22,17.42" stroke="#f5962a" stroke-width="2.5"/><path d="M13.76,20.90 A7.4,7.4 0 0 0 19.91,9.80" fill="none" stroke="#33240a" stroke-width="4"/><path d="M13.76,20.90 A7.4,7.4 0 0 0 19.91,9.80" fill="none" stroke="#f5962a" stroke-width="2.5"/><polygon points="22.3984,8.3625 14.8468,6.37416 17.4188,11.2375" fill="#f5962a" stroke="#33240a" stroke-width="0.8" stroke-linejoin="round" /><path d="M20.09,10.14 L19.78,9.58" stroke="#f5962a" stroke-width="2.5"/></svg><svg style="left:1174px;top:848px" width="27" height="26" viewBox="0 0 27 26"><circle cx="13.5" cy="13.5" r="10.4" fill="none" stroke="#2a1a10" stroke-width="2.9"/><circle cx="13.5" cy="13.5" r="10.4" fill="none" stroke="#e8963a" stroke-width="1.6"/><text x="13.8" y="19" text-anchor="middle" font-family="Liberation Sans,sans-serif" font-weight="bold" font-size="15" fill="#141414" stroke="#141414" stroke-width="0.6">P</text></svg><svg style="left:1202px;top:848px" width="27" height="26" viewBox="0 0 27 26"><circle cx="6.2" cy="6.4" r="2.2" fill="#f5962a"/><circle cx="13.5" cy="6.4" r="2.2" fill="#f5962a"/><circle cx="20.8" cy="6.4" r="2.2" fill="#141414"/><circle cx="6.2" cy="13.6" r="2.2" fill="#f5962a"/><circle cx="13.5" cy="13.6" r="2.2" fill="#f5962a"/><circle cx="20.8" cy="13.6" r="2.2" fill="#141414"/><circle cx="6.2" cy="20.8" r="2.2" fill="#141414"/><circle cx="13.5" cy="20.8" r="2.2" fill="#141414"/><circle cx="20.8" cy="20.8" r="2.2" fill="#141414"/></svg><div class="grp" style="left:1240px;top:848px;width:27px;height:26px"><div class="on" style="left:0px;top:0;width:27px;height:26px"></div></div><svg style="left:1240px;top:848px" width="27" height="26" viewBox="0 0 27 26"><rect x="6.8" y="3.4" width="12.6" height="20.6" fill="#161616"/><rect x="9.2" y="4.6" width="7.8" height="5.6" fill="#f5a84a"/><rect x="9.2" y="11.1" width="7.8" height="5.6" fill="#f5a84a"/><rect x="9.2" y="17.6" width="7.8" height="5.6" fill="#f5a84a"/><rect x="7.3" y="4.4" width="1.2" height="1.6" fill="#ddd"/><rect x="17.7" y="4.4" width="1.2" height="1.6" fill="#ddd"/><rect x="7.3" y="7.7" width="1.2" height="1.6" fill="#ddd"/><rect x="17.7" y="7.7" width="1.2" height="1.6" fill="#ddd"/><rect x="7.3" y="11" width="1.2" height="1.6" fill="#ddd"/><rect x="17.7" y="11" width="1.2" height="1.6" fill="#ddd"/><rect x="7.3" y="14.3" width="1.2" height="1.6" fill="#ddd"/><rect x="17.7" y="14.3" width="1.2" height="1.6" fill="#ddd"/><rect x="7.3" y="17.6" width="1.2" height="1.6" fill="#ddd"/><rect x="17.7" y="17.6" width="1.2" height="1.6" fill="#ddd"/><rect x="7.3" y="20.9" width="1.2" height="1.6" fill="#ddd"/><rect x="17.7" y="20.9" width="1.2" height="1.6" fill="#ddd"/><path d="M25.5 20.5L25.5 24.5L21.5 24.5z" fill="#111"/></svg><div class="b" style="left:39px;top:878px;width:928px;height:116px;border:1px solid #5a5a5a;border-top:none;background:#484848"></div><div class="b" style="left:39px;top:878px;width:928px;height:21px;background:#676767"></div><div class="b" style="left:40px;top:899px;width:926px;height:1px;background:#2c2c2c"></div><svg style="left:45px;top:883px" width="12" height="12"><rect width="12" height="12" fill="url(#gp)"/></svg><span class="t" style="left:66.5px;top:883.02px;color:#cfcfcf;letter-spacing:-0.315px;">Создать</span><span class="t" style="left:122px;top:883.02px;color:#cfcfcf;letter-spacing:0.047px;">Corona</span><span class="t" style="left:174px;top:883.02px;color:#cfcfcf;letter-spacing:-0.016px;">Правка</span><span class="t" style="left:226.7px;top:883.02px;color:#cfcfcf;letter-spacing:0.099px;">Функции</span><span class="t" style="left:286.7px;top:883.02px;color:#cfcfcf;letter-spacing:-0.312px;">Текстура</span><div class="b" style="left:42px;top:902.5px;width:456px;height:16.5px;border-radius:4px;background:linear-gradient(#747474,#686868);box-shadow:0 0 0 1px #2e2e2e;"></div><div class="b" style="left:270px;top:902.5px;width:114px;height:16.5px;background:#90b0e6"></div><div class="b" style="left:155px;top:902.5px;width:1px;height:16.5px;background:#2e2e2e"></div><div class="b" style="left:269px;top:902.5px;width:1px;height:16.5px;background:#2e2e2e"></div><div class="b" style="left:383px;top:902.5px;width:1px;height:16.5px;background:#2e2e2e"></div><svg style="left:270px;top:902.5px" width="8" height="8"><path d="M0 0H7.5L0 7.5z" fill="#3aa0f0"/></svg><svg style="left:384px;top:902.5px" width="9" height="8"><path d="M0 0H8.5L0 7.5z" fill="#ffd21a"/></svg><span class="t" style="left:89.3px;top:903.52px;color:#e4e4e4;letter-spacing:-0.806px;">Все</span><span class="t" style="left:190px;top:903.52px;color:#e4e4e4;letter-spacing:-0.421px;">Без слоя</span><span class="t" style="left:273.3px;top:903.52px;color:#101010;letter-spacing:-0.663px;">Power_Plug_CEE_7_7</span><span class="t" style="left:425.3px;top:903.52px;color:#e4e4e4;letter-spacing:-0.642px;">Scene</span><div class="b" style="left:42px;top:922px;width:43.5px;height:57.5px;background:#6e6e6e;overflow:hidden;box-shadow:0 0 0 1px #3a3a3a"><svg style="left:0;top:0" width="43.5" height="43.5" viewBox="0 0 44 44"><defs><radialGradient id="mb0" cx=".36" cy=".36" r=".68"><stop offset="0" stop-color="#fff"/><stop offset=".35" stop-color="#dedede"/><stop offset=".8" stop-color="#8e8e8e"/><stop offset="1" stop-color="#555"/></radialGradient></defs><rect width="44" height="44" fill="#858585"/><g stroke="#adadad" stroke-width="6"><path d="M-37,46L11,-2"/><path d="M-22.5,46L25.5,-2"/><path d="M-8,46L40,-2"/><path d="M6.5,46L54.5,-2"/><path d="M21,46L69,-2"/><path d="M35.5,46L83.5,-2"/><path d="M50,46L98,-2"/></g><circle cx="20.5" cy="22" r="17.6" fill="url(#mb0)"/><path d="M13,6.6C20,0.8 32,3.4 36,12.4C33,9.6 30.4,10 28.6,8.6C26,9.4 22.6,9 21.8,6.2C18.6,5 15.4,6 13,6.6z" fill="#1c1c1c"/><path d="M0,0H10L0,10z" fill="#2aa5ff"/></svg><span class="t" style="left:1.5px;top:43.5px;color:#e8e8e8;letter-spacing:-0.2px">Power_Plug_CEE_7_7</span></div><div class="b" style="left:91px;top:922px;width:43.5px;height:57.5px;background:#6e6e6e;overflow:hidden;box-shadow:0 0 0 1px #3a3a3a"><svg style="left:0;top:0" width="43.5" height="43.5" viewBox="0 0 44 44"><defs><radialGradient id="mb1" cx=".36" cy=".36" r=".68"><stop offset="0" stop-color="#fff"/><stop offset=".35" stop-color="#dedede"/><stop offset=".8" stop-color="#8e8e8e"/><stop offset="1" stop-color="#555"/></radialGradient></defs><rect width="44" height="44" fill="#858585"/><g stroke="#adadad" stroke-width="6"><path d="M-37,46L11,-2"/><path d="M-22.5,46L25.5,-2"/><path d="M-8,46L40,-2"/><path d="M6.5,46L54.5,-2"/><path d="M21,46L69,-2"/><path d="M35.5,46L83.5,-2"/><path d="M50,46L98,-2"/></g><path d="M12.6,7.6C18,0.8 30,2.6 35.6,9.6C31,6.6 27,7.4 25.8,6C22,8.6 16,9.6 12.6,7.6z" fill="#808890"/><path d="M12.6,7.6C18,0.8 30,2.6 35.6,9.6" fill="none" stroke="#2a2a2a" stroke-width="0.9"/><path d="M0,0H10L0,10z" fill="#2aa5ff"/></svg><span class="t" style="left:1.5px;top:43.5px;color:#e8e8e8;letter-spacing:-0.2px">Power_Plug_CEE_7_7</span></div><div class="b" style="left:970px;top:878px;width:297px;height:116px;border:1px solid #5a5a5a;background:#484848"></div><svg style="left:975px;top:883px" width="12" height="12"><rect width="12" height="12" fill="url(#gp)"/></svg><span class="t" style="left:994px;top:880.52px;color:#8c8c8c;">--</span><span class="t" style="left:1086.7px;top:880.52px;color:#8c8c8c;">--</span><span class="t" style="left:1178.3px;top:880.52px;color:#8c8c8c;">--</span><div class="b" style="left:971px;top:899px;width:295px;height:1px;background:#5e5e5e"></div><div class="b" style="left:971px;top:900px;width:295px;height:1px;background:#3a3a3a"></div><span class="t" style="left:974px;top:906.52px;color:#d0d0d0;">X</span><div class="fld" style="left:984px;top:906px;width:83px;height:16px;background:#414141;border-color:#3a3a3a #505050 #505050 #3a3a3a"></div><span class="t" style="left:989px;top:906.52px;color:#707070;">0 cm</span><svg style="left:1059px;top:908px" width="6" height="12" viewBox="0 0 6 12"><path d="M3 0.5L5.8 5H0.2z M3 11.5L5.8 7H0.2z" fill="#5e5e5e"/></svg><span class="t" style="left:1071px;top:906.52px;color:#d0d0d0;">X</span><div class="fld" style="left:1081px;top:906px;width:83px;height:16px;background:#414141;border-color:#3a3a3a #505050 #505050 #3a3a3a"></div><span class="t" style="left:1086px;top:906.52px;color:#707070;">0 cm</span><svg style="left:1156px;top:908px" width="6" height="12" viewBox="0 0 6 12"><path d="M3 0.5L5.8 5H0.2z M3 11.5L5.8 7H0.2z" fill="#5e5e5e"/></svg><span class="t" style="left:1168px;top:906.52px;color:#d0d0d0;">H</span><div class="fld" style="left:1180px;top:906px;width:82px;height:16px;background:#414141;border-color:#3a3a3a #505050 #505050 #3a3a3a"></div><span class="t" style="left:1185px;top:906.52px;color:#707070;">0 °</span><svg style="left:1254px;top:908px" width="6" height="12" viewBox="0 0 6 12"><path d="M3 0.5L5.8 5H0.2z M3 11.5L5.8 7H0.2z" fill="#5e5e5e"/></svg><span class="t" style="left:974px;top:926.52px;color:#d0d0d0;">Y</span><div class="fld" style="left:984px;top:926px;width:83px;height:16px;background:#414141;border-color:#3a3a3a #505050 #505050 #3a3a3a"></div><span class="t" style="left:989px;top:926.52px;color:#707070;">0 cm</span><svg style="left:1059px;top:928px" width="6" height="12" viewBox="0 0 6 12"><path d="M3 0.5L5.8 5H0.2z M3 11.5L5.8 7H0.2z" fill="#5e5e5e"/></svg><span class="t" style="left:1071px;top:926.52px;color:#d0d0d0;">Y</span><div class="fld" style="left:1081px;top:926px;width:83px;height:16px;background:#414141;border-color:#3a3a3a #505050 #505050 #3a3a3a"></div><span class="t" style="left:1086px;top:926.52px;color:#707070;">0 cm</span><svg style="left:1156px;top:928px" width="6" height="12" viewBox="0 0 6 12"><path d="M3 0.5L5.8 5H0.2z M3 11.5L5.8 7H0.2z" fill="#5e5e5e"/></svg><span class="t" style="left:1168px;top:926.52px;color:#d0d0d0;">P</span><div class="fld" style="left:1180px;top:926px;width:82px;height:16px;background:#414141;border-color:#3a3a3a #505050 #505050 #3a3a3a"></div><span class="t" style="left:1185px;top:926.52px;color:#707070;">0 °</span><svg style="left:1254px;top:928px" width="6" height="12" viewBox="0 0 6 12"><path d="M3 0.5L5.8 5H0.2z M3 11.5L5.8 7H0.2z" fill="#5e5e5e"/></svg><span class="t" style="left:974px;top:946.52px;color:#d0d0d0;">Z</span><div class="fld" style="left:984px;top:946px;width:83px;height:16px;background:#414141;border-color:#3a3a3a #505050 #505050 #3a3a3a"></div><span class="t" style="left:989px;top:946.52px;color:#707070;">0 cm</span><svg style="left:1059px;top:948px" width="6" height="12" viewBox="0 0 6 12"><path d="M3 0.5L5.8 5H0.2z M3 11.5L5.8 7H0.2z" fill="#5e5e5e"/></svg><span class="t" style="left:1071px;top:946.52px;color:#d0d0d0;">Z</span><div class="fld" style="left:1081px;top:946px;width:83px;height:16px;background:#414141;border-color:#3a3a3a #505050 #505050 #3a3a3a"></div><span class="t" style="left:1086px;top:946.52px;color:#707070;">0 cm</span><svg style="left:1156px;top:948px" width="6" height="12" viewBox="0 0 6 12"><path d="M3 0.5L5.8 5H0.2z M3 11.5L5.8 7H0.2z" fill="#5e5e5e"/></svg><span class="t" style="left:1168px;top:946.52px;color:#d0d0d0;">B</span><div class="fld" style="left:1180px;top:946px;width:82px;height:16px;background:#414141;border-color:#3a3a3a #505050 #505050 #3a3a3a"></div><span class="t" style="left:1185px;top:946.52px;color:#707070;">0 °</span><svg style="left:1254px;top:948px" width="6" height="12" viewBox="0 0 6 12"><path d="M3 0.5L5.8 5H0.2z M3 11.5L5.8 7H0.2z" fill="#5e5e5e"/></svg><div class="b" style="left:984px;top:968px;width:83px;height:15.5px;border-radius:3px;background:linear-gradient(#606060,#585858);box-shadow:0 0 0 1px #3e3e3e"></div><span class="t" style="left:991.7px;top:968.72px;color:#858585;letter-spacing:-0.033px;">Мир</span><svg style="left:1055px;top:973px" width="8" height="5"><path d="M0 0h8L4 4.5z" fill="#747474"/></svg><div class="b" style="left:1081px;top:968px;width:83px;height:15.5px;border-radius:3px;background:linear-gradient(#606060,#585858);box-shadow:0 0 0 1px #3e3e3e"></div><span class="t" style="left:1088.3px;top:968.72px;color:#858585;letter-spacing:-0.357px;">Масштаб</span><svg style="left:1152px;top:973px" width="8" height="5"><path d="M0 0h8L4 4.5z" fill="#747474"/></svg><div class="b" style="left:1180px;top:968px;width:82px;height:16px;border-radius:8px;background:linear-gradient(#727272,#606060);box-shadow:0 0 0 1px #2c2c2c"></div><span class="t" style="left:1190.5px;top:969.52px;color:#e8e8e8;letter-spacing:0.098px;">Применить</span><div class="b" style="left:0px;top:997px;width:1268px;height:1px;background:#5a5a5a"></div><div class="b" style="left:1267px;top:997px;width:1px;height:20px;background:#5a5a5a"></div><svg style="left:4px;top:1001px" width="12" height="12"><rect width="12" height="12" fill="url(#gp)"/></svg><span class="t" style="left:-1px;top:990px;line-height:20px;transform-origin:0 0;transform:rotate(-90deg);font-weight:bold;font-style:italic;font-size:18.8px;letter-spacing:-2.1px;color:#9a9a9a;-webkit-text-stroke:0.9px #9a9a9a;">MAXON</span><span class="t" style="left:17.5px;top:990.5px;line-height:20px;transform-origin:0 0;transform:rotate(-90deg);font-size:17.3px;letter-spacing:-1.55px;color:#8e8e8e;">CINEMA 4D</span>
</div>
</body></html>
